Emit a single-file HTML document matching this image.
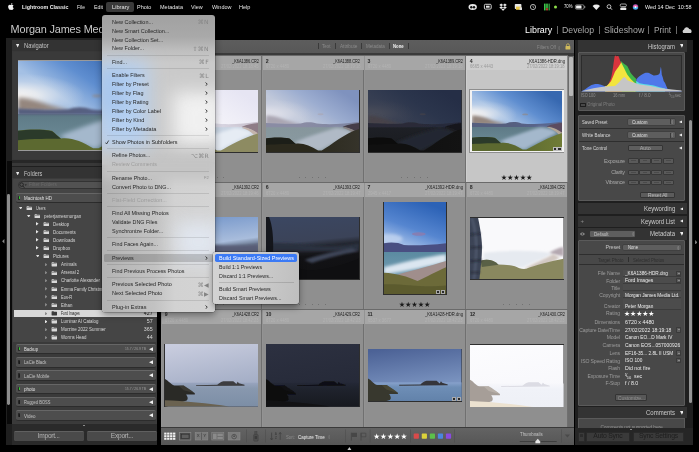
<!DOCTYPE html>
<html><head><meta charset="utf-8"><title>Lightroom Classic</title>
<style>
html,body{margin:0;padding:0;background:#000;}
body{width:699px;height:452px;overflow:hidden;position:relative;font-family:"Liberation Sans",sans-serif;}
#root{position:absolute;left:0;top:0;width:699px;height:452px;overflow:hidden;background:#000;}
#root span{display:block;opacity:0.999;}
</style></head><body><div id="root">
<svg style="position:absolute;left:7.8px;top:3.4px" width="5.8" height="7" viewBox="0 0 17 20"><path fill="#f0f0f0" d="M14.1,10.6c0-2.5,2-3.700,2.100-3.800c-1.200-1.700-3-1.900-3.600-2c-1.500-0.200-3,0.900-3.800,0.900c-0.800,0-2-0.900-3.300-0.900C3.800,4.900,2.200,5.800,1.300,7.400c-1.800,3.100-0.500,7.700,1.300,10.200c0.900,1.200,1.900,2.600,3.200,2.500c1.300-0.100,1.800-0.800,3.300-0.800c1.500,0,2,0.800,3.300,0.800c1.400,0,2.300-1.200,3.100-2.500c1-1.400,1.400-2.800,1.400-2.900C16.900,14.700,14.100,13.700,14.100,10.600z M11.600,3.200c0.700-0.800,1.200-2,1-3.200c-1,0-2.200,0.700-2.900,1.500C9,2.300,8.500,3.500,8.700,4.600C9.800,4.700,10.900,4.100,11.600,3.200z"/></svg>
<span style="position:absolute;top:4.34px;font-size:6.20px;line-height:1;color:#f2f2f2;white-space:pre;left:21.80px;transform:scaleX(0.8597);transform-origin:0 50%;font-weight:bold;">Lightroom Classic</span>
<div style="position:absolute;left:106.00px;top:2.40px;width:28.40px;height:10.00px;background:#3a3a3a;border-radius:2px;"></div>
<span style="position:absolute;top:4.34px;font-size:6.20px;line-height:1;color:#e6e6e6;white-space:pre;left:77.00px;transform:scaleX(0.8007);transform-origin:0 50%;">File</span>
<span style="position:absolute;top:4.34px;font-size:6.20px;line-height:1;color:#e6e6e6;white-space:pre;left:94.00px;transform:scaleX(0.8424);transform-origin:0 50%;">Edit</span>
<span style="position:absolute;top:4.34px;font-size:6.20px;line-height:1;color:#e6e6e6;white-space:pre;left:111.60px;transform:scaleX(0.9181);transform-origin:0 50%;">Library</span>
<span style="position:absolute;top:4.34px;font-size:6.20px;line-height:1;color:#e6e6e6;white-space:pre;left:137.20px;transform:scaleX(0.8887);transform-origin:0 50%;">Photo</span>
<span style="position:absolute;top:4.34px;font-size:6.20px;line-height:1;color:#e6e6e6;white-space:pre;left:159.80px;transform:scaleX(0.8897);transform-origin:0 50%;">Metadata</span>
<span style="position:absolute;top:4.34px;font-size:6.20px;line-height:1;color:#e6e6e6;white-space:pre;left:191.40px;transform:scaleX(0.8704);transform-origin:0 50%;">View</span>
<span style="position:absolute;top:4.34px;font-size:6.20px;line-height:1;color:#e6e6e6;white-space:pre;left:211.60px;transform:scaleX(0.8798);transform-origin:0 50%;">Window</span>
<span style="position:absolute;top:4.34px;font-size:6.20px;line-height:1;color:#e6e6e6;white-space:pre;left:238.60px;transform:scaleX(0.8940);transform-origin:0 50%;">Help</span>
<span style="position:absolute;top:3.99px;font-size:6.10px;line-height:1;color:#f0f0f0;white-space:pre;left:645.30px;transform:scaleX(0.8923);transform-origin:0 50%;">Wed 14 Dec  10:58</span>
<span style="position:absolute;top:4.78px;font-size:4.60px;line-height:1;color:#f0f0f0;white-space:pre;left:564.30px;transform:scaleX(0.9232);transform-origin:0 50%;">70%</span>
<svg style="position:absolute;left:460px;top:0" width="239" height="14" viewBox="460 0 239 14"><ellipse cx="472.7" cy="7" rx="4.2" ry="2.9" fill="#e8e8e8"/><circle cx="471.3" cy="7.2" r="1.2" fill="#111"/><circle cx="474" cy="7.2" r="1.2" fill="#111"/><rect x="484.4" y="4.3" width="6.8" height="4.8" rx="1" fill="none" stroke="#e8e8e8" stroke-width="0.9"/><rect x="486" y="5.7" width="3.6" height="2" fill="#e8e8e8"/><path d="M501.2,3.6 l1.9,1.3 -1.9,1.3 -1.9,-1.3z M504.9,3.6 l1.9,1.3 -1.9,1.3 -1.9,-1.3z M501.2,6.3 l1.9,1.3 -1.9,1.3 -1.9,-1.3z M504.9,6.3 l1.9,1.3 -1.9,1.3 -1.9,-1.3z M503.05,8.4 l1.7,1.2 -1.7,1.1 -1.7,-1.1z" fill="#e8e8e8"/><rect x="514.8" y="4" width="6.6" height="5" rx="0.8" fill="#e8e8e8"/><rect x="516" y="6.6" width="4.6" height="3.2" fill="#e8c64a"/><rect x="519.6" y="7.4" width="2.4" height="2.6" fill="#ddd"/><circle cx="533" cy="7" r="2.6" fill="none" stroke="#d8d8d8" stroke-width="0.8"/><path d="M533,5.6 V7.1 L534,7.8" stroke="#d8d8d8" stroke-width="0.6" fill="none"/><rect x="544" y="3.6" width="1.6" height="6.8" fill="#3ec84a"/><rect x="546.2" y="3.6" width="1.6" height="4.6" fill="#3ec84a"/><rect x="546.2" y="8.2" width="1.6" height="2.2" fill="#e04a3a"/><rect x="548.4" y="3.6" width="1.6" height="6.8" fill="#2a8a34"/><circle cx="555.5" cy="7" r="1.5" fill="#8ede4a"/><rect x="575.4" y="4.8" width="8.6" height="4.4" rx="1.2" fill="none" stroke="#bdbdbd" stroke-width="0.6"/><rect x="576.1" y="5.5" width="5.4" height="3" rx="0.6" fill="#f0f0f0"/><rect x="584.4" y="6.1" width="0.8" height="1.8" fill="#bdbdbd"/><path d="M592.6,6 A5.4,5.4 0 0 1 600,6 L596.3,10 Z" fill="#ececec"/><circle cx="609" cy="6.6" r="1.9" fill="none" stroke="#e8e8e8" stroke-width="0.8"/><path d="M610.4,8 L612,9.7" stroke="#e8e8e8" stroke-width="0.9"/><rect x="620.2" y="4" width="6.2" height="2.6" rx="1.2" fill="none" stroke="#e8e8e8" stroke-width="0.7"/><rect x="620.2" y="7.5" width="6.2" height="2.6" rx="1.2" fill="#e8e8e8"/><circle cx="635.5" cy="7" r="2.9" fill="#3a3a6a"/><path d="M633,7 a2.5,2.5 0 0 1 5,0z" fill="#e85aa8"/><path d="M633,7 a2.5,2.5 0 0 0 5,0z" fill="#4ab4f0"/><circle cx="635.5" cy="7" r="1" fill="#fff"/></svg>
<span style="position:absolute;top:24.16px;font-size:10.90px;line-height:1;color:#cacaca;white-space:pre;left:10.60px;letter-spacing:-0.15px;">Morgan James Media Ltd</span>
<span style="position:absolute;top:25.05px;font-size:9.40px;line-height:1;color:#ffffff;white-space:pre;left:525.00px;transform:scaleX(0.9501);transform-origin:0 50%;">Library</span>
<span style="position:absolute;top:25.05px;font-size:9.40px;line-height:1;color:#a8a8a8;white-space:pre;left:561.90px;transform:scaleX(0.9307);transform-origin:0 50%;">Develop</span>
<span style="position:absolute;top:25.05px;font-size:9.40px;line-height:1;color:#a8a8a8;white-space:pre;left:603.60px;transform:scaleX(0.9429);transform-origin:0 50%;">Slideshow</span>
<span style="position:absolute;top:25.05px;font-size:9.40px;line-height:1;color:#a8a8a8;white-space:pre;left:653.80px;transform:scaleX(0.8899);transform-origin:0 50%;">Print</span>
<div style="position:absolute;left:557.10px;top:26.00px;width:0.60px;height:8.00px;background:#6a6a6a;"></div>
<div style="position:absolute;left:598.80px;top:26.00px;width:0.60px;height:8.00px;background:#6a6a6a;"></div>
<div style="position:absolute;left:648.40px;top:26.00px;width:0.60px;height:8.00px;background:#6a6a6a;"></div>
<div style="position:absolute;left:675.70px;top:26.00px;width:0.60px;height:8.00px;background:#6a6a6a;"></div>
<svg style="position:absolute;left:682px;top:26.5px" width="10" height="6.4" viewBox="0 0 20 13"><path d="M4.5,13 A4,4 0 0 1 4,5.200 A5.500,5.500 0 0 1 14.500,4 A4.600,4.600 0 0 1 16,13 Z" fill="#d0d0d0"/></svg>
<div style="position:absolute;left:6.00px;top:38.00px;width:151.20px;height:407.00px;background:#1f1f1f;"></div>
<div style="position:absolute;left:6.60px;top:161.00px;width:5.20px;height:263.00px;background:#0a0a0a;"></div>
<div style="position:absolute;left:7.20px;top:194.40px;width:2.80px;height:210.60px;background:#8c8c8c;border-radius:1.4px;"></div>
<svg style="position:absolute;left:2px;top:239.3px" width="2.5" height="4.6" viewBox="0 0 3 6"><path d="M3,0 L0,3 L3,6Z" fill="#8a8a8a"/></svg>
<div style="position:absolute;left:12.00px;top:39.60px;width:145.20px;height:11.40px;background:#333333;"></div>
<svg style="position:absolute;left:15.7px;top:44.2px" width="3.3" height="3.5" viewBox="0 0 4 4"><path d="M0,0 L4,0 L2,4Z" fill="#e8e8e8"/></svg>
<span style="position:absolute;top:42.41px;font-size:7.20px;line-height:1;color:#c2c2c2;white-space:pre;left:23.70px;transform:scaleX(0.8048);transform-origin:0 50%;">Navigator</span>
<div style="position:absolute;left:12.00px;top:51.00px;width:145.20px;height:109.00px;background:#383838;"></div>
<div style="position:absolute;left:13.40px;top:52.40px;width:142.60px;height:106.20px;background:#3a3a3a;border-radius:1px;"></div>
<div style="position:absolute;left:17.80px;top:59.90px;width:135.40px;height:90.70px;background:#9a9a9a;"></div>
<svg style="position:absolute;left:18.40px;top:60.50px;" width="134.20" height="89.50" viewBox="0 0 150 100" preserveAspectRatio="none"><defs><linearGradient id="a1" gradientUnits="userSpaceOnUse" x1="118" y1="0" x2="78" y2="60"><stop offset="0" stop-color="#3768b0"/><stop offset="0.55" stop-color="#5f8ed0"/><stop offset="1" stop-color="#a4c0e4"/></linearGradient><radialGradient id="a2" cx="0" cy="0.5" r="0.5" gradientTransform="translate(0 0.5) scale(1.0 0.6) translate(0 -0.5)"><stop offset="0" stop-color="#f6f4f2" stop-opacity="1.0"/><stop offset="0.3" stop-color="#f6f4f2" stop-opacity="0.8"/><stop offset="0.65" stop-color="#f6f4f2" stop-opacity="0.28"/><stop offset="1" stop-color="#f6f4f2" stop-opacity="0"/></radialGradient><linearGradient id="a3" x1="0" y1="0" x2="0" y2="1"><stop offset="0" stop-color="#5e7a86"/><stop offset="1" stop-color="#70909c"/></linearGradient><linearGradient id="a4" x1="0" y1="0" x2="1" y2="0"><stop offset="0" stop-color="#565e7e"/><stop offset="0.4" stop-color="#565e7e"/><stop offset="1" stop-color="#5a6a96"/></linearGradient><linearGradient id="a7" x1="0" y1="0" x2="1" y2="0"><stop offset="0" stop-color="#5c6930"/><stop offset="0.5" stop-color="#5c6930"/><stop offset="1" stop-color="#707c36"/></linearGradient><filter id="a5" x="-10%" y="-40%" width="120%" height="180%"><feGaussianBlur stdDeviation="2.4"/></filter><filter id="a6" x="-10%" y="-40%" width="120%" height="180%"><feGaussianBlur stdDeviation="1.1"/></filter></defs><rect width="150" height="100" fill="url(#a1)"/><rect y="-3" width="150" height="84" fill="url(#a2)"/><path d="M0,41 C10,41 22,44 34,49 C44,52 54,54 60,56 L0,57 Z" fill="#94867e" filter="url(#a5)"/><rect y="59" width="150" height="41" fill="url(#a3)"/><path d="M0,53 C20,54 40,55 56,54 C64,51 74,51 82,54 C100,56 126,55 150,51 L150,60 L0,60 Z" fill="url(#a4)" filter="url(#a6)"/><ellipse cx="88" cy="39" rx="5" ry="1.500" fill="#94867e" opacity="0.6" filter="url(#a6)"/><path d="M124,59 C132,55 142,54 150,53 L150,72 C144,66 136,61 124,60 Z" fill="#5c4c5e" filter="url(#a6)"/><path d="M112,61 C96,66 70,74 46,84 L58,90 C70,92 80,96 86,98 C100,90 125,78 141,70 C137,65 124,61 112,61 Z" fill="#a4b8cc" filter="url(#a5)"/><path d="M124,61 C132,63 139,67 143,72 L150,70 C144,65 134,61 128,60 Z" fill="#b4a696" filter="url(#a6)"/><path d="M0,78 C10,76 28,76 38,78 C42,81 44,84 48,86.500 C60,85 72,90 84,97.500 L90,97.500 C104,90 128,76 150,70 L150,100 L0,100 Z" fill="url(#a7)"/><path d="M0,78 C10,76.500 28,76 38,78.500 C42,81 44,84 48,87 C36,87 16,87 0,88.500 Z" fill="#2b3a2a"/></svg>
<div style="position:absolute;left:12.00px;top:160.00px;width:145.20px;height:3.20px;background:#272727;"></div>
<div style="position:absolute;left:12.00px;top:163.20px;width:145.20px;height:3.20px;background:#383838;"></div>
<div style="position:absolute;left:12.00px;top:166.60px;width:145.20px;height:11.80px;background:#333333;"></div>
<svg style="position:absolute;left:15.9px;top:171.6px" width="3.3" height="3.5" viewBox="0 0 4 4"><path d="M0,0 L4,0 L2,4Z" fill="#e8e8e8"/></svg>
<span style="position:absolute;top:169.81px;font-size:7.20px;line-height:1;color:#c2c2c2;white-space:pre;left:23.60px;transform:scaleX(0.7664);transform-origin:0 50%;">Folders</span>
<div style="position:absolute;left:12.00px;top:178.40px;width:145.20px;height:245.60px;background:#3b3b3b;"></div>
<div style="position:absolute;left:13.40px;top:179.40px;width:142.60px;height:243.60px;background:#454545;border-radius:1px;"></div>
<div style="position:absolute;left:17.60px;top:180.60px;width:134.40px;height:8.40px;background:#525252;border-radius:4px;border:0.5px solid #333;box-sizing:border-box;"></div>
<svg style="position:absolute;left:19px;top:181.6px" width="8" height="6.500" viewBox="0 0 8 6.500"><circle cx="2.6" cy="2.6" r="1.8" fill="none" stroke="#1c1c1c" stroke-width="0.8"/><path d="M3.800,4 L5.400,5.800" stroke="#1c1c1c" stroke-width="0.9"/><path d="M5.600,2.400 h2.200 l-1.100,1.300z" fill="#1c1c1c"/></svg>
<span style="position:absolute;top:181.75px;font-size:5.80px;line-height:1;color:#6a6a6a;white-space:pre;left:29.00px;transform:scaleX(0.8274);transform-origin:0 50%;">Filter Folders</span>
<div style="position:absolute;left:16.40px;top:193.00px;width:139.60px;height:10.00px;background:#4d4d4d;border-radius:2px;border-top:0.6px solid #666;border-bottom:0.6px solid #2c2c2c;box-sizing:border-box;"></div>
<div style="position:absolute;left:18.30px;top:195.80px;width:2.20px;height:4.20px;background:#262626;border-radius:0.8px;"></div>
<div style="position:absolute;left:18.80px;top:196.30px;width:1.20px;height:3.20px;background:#35c235;border-radius:0.5px;"></div>
<span style="position:absolute;top:196.05px;font-size:5.60px;line-height:1;color:#e2e2e2;white-space:pre;left:23.60px;transform:scaleX(0.7933);transform-origin:0 50%;">Macintosh HD</span>
<svg style="position:absolute;left:19.00px;top:206.70px" width="3.400" height="2.600" viewBox="0 0 4 3"><path d="M0,0 L4,0 L2,3Z" fill="#e0e0e0"/></svg>
<svg style="position:absolute;left:25.80px;top:205.90px" width="6.6" height="4.6" viewBox="0 0 14 11"><path d="M0.500,1.500 Q0.500,0.500 1.500,0.500 H5 L6.500,2 H12.500 Q13.500,2 13.500,3 V9.500 Q13.500,10.500 12.500,10.500 H1.500 Q0.500,10.500 0.500,9.500Z" fill="#d8d8d8"/><rect x="1.500" y="3.600" width="11" height="1" fill="#444"/></svg>
<span style="position:absolute;top:205.65px;font-size:5.60px;line-height:1;color:#d8d8d8;white-space:pre;left:36.00px;transform:scaleX(0.6496);transform-origin:0 50%;">Users</span>
<svg style="position:absolute;left:27.40px;top:214.70px" width="3.400" height="2.600" viewBox="0 0 4 3"><path d="M0,0 L4,0 L2,3Z" fill="#e0e0e0"/></svg>
<svg style="position:absolute;left:34.20px;top:213.90px" width="6.6" height="4.6" viewBox="0 0 14 11"><path d="M0.500,1.500 Q0.500,0.500 1.500,0.500 H5 L6.500,2 H12.500 Q13.500,2 13.500,3 V9.500 Q13.500,10.500 12.500,10.500 H1.500 Q0.500,10.500 0.500,9.500Z" fill="#d8d8d8"/><rect x="1.500" y="3.600" width="11" height="1" fill="#444"/></svg>
<span style="position:absolute;top:213.65px;font-size:5.60px;line-height:1;color:#d8d8d8;white-space:pre;left:44.40px;transform:scaleX(0.7967);transform-origin:0 50%;">peterjamesmorgan</span>
<svg style="position:absolute;left:36.40px;top:222.30px" width="2.600" height="3.400" viewBox="0 0 3 4"><path d="M0,0 L3,2 L0,4Z" fill="#e8e8e8"/></svg>
<svg style="position:absolute;left:42.60px;top:221.90px" width="6.6" height="4.6" viewBox="0 0 14 11"><path d="M0.500,1.500 Q0.500,0.500 1.500,0.500 H5 L6.500,2 H12.500 Q13.500,2 13.500,3 V9.500 Q13.500,10.500 12.500,10.500 H1.500 Q0.500,10.500 0.500,9.500Z" fill="#d8d8d8"/><rect x="1.500" y="3.600" width="11" height="1" fill="#444"/></svg>
<span style="position:absolute;top:221.65px;font-size:5.60px;line-height:1;color:#d8d8d8;white-space:pre;left:52.80px;transform:scaleX(0.7886);transform-origin:0 50%;">Desktop</span>
<svg style="position:absolute;left:36.40px;top:230.30px" width="2.600" height="3.400" viewBox="0 0 3 4"><path d="M0,0 L3,2 L0,4Z" fill="#e8e8e8"/></svg>
<svg style="position:absolute;left:42.60px;top:229.90px" width="6.6" height="4.6" viewBox="0 0 14 11"><path d="M0.500,1.500 Q0.500,0.500 1.500,0.500 H5 L6.500,2 H12.500 Q13.500,2 13.500,3 V9.500 Q13.500,10.500 12.500,10.500 H1.500 Q0.500,10.500 0.500,9.500Z" fill="#d8d8d8"/><rect x="1.500" y="3.600" width="11" height="1" fill="#444"/></svg>
<span style="position:absolute;top:229.65px;font-size:5.60px;line-height:1;color:#d8d8d8;white-space:pre;left:52.80px;transform:scaleX(0.8015);transform-origin:0 50%;">Documents</span>
<svg style="position:absolute;left:36.40px;top:238.30px" width="2.600" height="3.400" viewBox="0 0 3 4"><path d="M0,0 L3,2 L0,4Z" fill="#e8e8e8"/></svg>
<svg style="position:absolute;left:42.60px;top:237.90px" width="6.6" height="4.6" viewBox="0 0 14 11"><path d="M0.500,1.500 Q0.500,0.500 1.500,0.500 H5 L6.500,2 H12.500 Q13.500,2 13.500,3 V9.500 Q13.500,10.500 12.500,10.500 H1.500 Q0.500,10.500 0.500,9.500Z" fill="#d8d8d8"/><rect x="1.500" y="3.600" width="11" height="1" fill="#444"/></svg>
<span style="position:absolute;top:237.65px;font-size:5.60px;line-height:1;color:#d8d8d8;white-space:pre;left:52.80px;transform:scaleX(0.8085);transform-origin:0 50%;">Downloads</span>
<svg style="position:absolute;left:36.40px;top:246.30px" width="2.600" height="3.400" viewBox="0 0 3 4"><path d="M0,0 L3,2 L0,4Z" fill="#e8e8e8"/></svg>
<svg style="position:absolute;left:42.60px;top:245.90px" width="6.6" height="4.6" viewBox="0 0 14 11"><path d="M0.500,1.500 Q0.500,0.500 1.500,0.500 H5 L6.500,2 H12.500 Q13.500,2 13.500,3 V9.500 Q13.500,10.500 12.500,10.500 H1.500 Q0.500,10.500 0.500,9.500Z" fill="#d8d8d8"/><rect x="1.500" y="3.600" width="11" height="1" fill="#444"/></svg>
<span style="position:absolute;top:245.65px;font-size:5.60px;line-height:1;color:#d8d8d8;white-space:pre;left:52.80px;transform:scaleX(0.8126);transform-origin:0 50%;">Dropbox</span>
<svg style="position:absolute;left:35.80px;top:254.70px" width="3.400" height="2.600" viewBox="0 0 4 3"><path d="M0,0 L4,0 L2,3Z" fill="#e0e0e0"/></svg>
<svg style="position:absolute;left:42.60px;top:253.90px" width="6.6" height="4.6" viewBox="0 0 14 11"><path d="M0.500,1.500 Q0.500,0.500 1.500,0.500 H5 L6.500,2 H12.500 Q13.500,2 13.500,3 V9.500 Q13.500,10.500 12.500,10.500 H1.500 Q0.500,10.500 0.500,9.500Z" fill="#d8d8d8"/><rect x="1.500" y="3.600" width="11" height="1" fill="#444"/></svg>
<span style="position:absolute;top:253.65px;font-size:5.60px;line-height:1;color:#d8d8d8;white-space:pre;left:52.80px;transform:scaleX(0.7810);transform-origin:0 50%;">Pictures</span>
<svg style="position:absolute;left:44.80px;top:262.70px" width="2.600" height="3.400" viewBox="0 0 3 4"><path d="M0,0 L3,2 L0,4Z" fill="#8a8a8a"/></svg>
<svg style="position:absolute;left:51.00px;top:262.30px" width="6.6" height="4.6" viewBox="0 0 14 11"><path d="M0.500,1.500 Q0.500,0.500 1.500,0.500 H5 L6.500,2 H12.500 Q13.500,2 13.500,3 V9.500 Q13.500,10.500 12.500,10.500 H1.500 Q0.500,10.500 0.500,9.500Z" fill="#d8d8d8"/><rect x="1.500" y="3.600" width="11" height="1" fill="#444"/></svg>
<span style="position:absolute;top:262.05px;font-size:5.60px;line-height:1;color:#d8d8d8;white-space:pre;left:61.20px;transform:scaleX(0.7932);transform-origin:0 50%;">Animals</span>
<svg style="position:absolute;left:44.80px;top:270.90px" width="2.600" height="3.400" viewBox="0 0 3 4"><path d="M0,0 L3,2 L0,4Z" fill="#8a8a8a"/></svg>
<svg style="position:absolute;left:51.00px;top:270.50px" width="6.6" height="4.6" viewBox="0 0 14 11"><path d="M0.500,1.500 Q0.500,0.500 1.500,0.500 H5 L6.500,2 H12.500 Q13.500,2 13.500,3 V9.500 Q13.500,10.500 12.500,10.500 H1.500 Q0.500,10.500 0.500,9.500Z" fill="#d8d8d8"/><rect x="1.500" y="3.600" width="11" height="1" fill="#444"/></svg>
<span style="position:absolute;top:270.25px;font-size:5.60px;line-height:1;color:#d8d8d8;white-space:pre;left:61.20px;transform:scaleX(0.7693);transform-origin:0 50%;">Arsenal 2</span>
<svg style="position:absolute;left:44.80px;top:279.10px" width="2.600" height="3.400" viewBox="0 0 3 4"><path d="M0,0 L3,2 L0,4Z" fill="#8a8a8a"/></svg>
<svg style="position:absolute;left:51.00px;top:278.70px" width="6.6" height="4.6" viewBox="0 0 14 11"><path d="M0.500,1.500 Q0.500,0.500 1.500,0.500 H5 L6.500,2 H12.500 Q13.500,2 13.500,3 V9.500 Q13.500,10.500 12.500,10.500 H1.500 Q0.500,10.500 0.500,9.500Z" fill="#d8d8d8"/><rect x="1.500" y="3.600" width="11" height="1" fill="#444"/></svg>
<span style="position:absolute;top:278.45px;font-size:5.60px;line-height:1;color:#d8d8d8;white-space:pre;left:61.20px;transform:scaleX(0.7929);transform-origin:0 50%;">Charlotte Alexander</span>
<svg style="position:absolute;left:44.80px;top:287.30px" width="2.600" height="3.400" viewBox="0 0 3 4"><path d="M0,0 L3,2 L0,4Z" fill="#8a8a8a"/></svg>
<svg style="position:absolute;left:51.00px;top:286.90px" width="6.6" height="4.6" viewBox="0 0 14 11"><path d="M0.500,1.500 Q0.500,0.500 1.500,0.500 H5 L6.500,2 H12.500 Q13.500,2 13.500,3 V9.500 Q13.500,10.500 12.500,10.500 H1.500 Q0.500,10.500 0.500,9.500Z" fill="#d8d8d8"/><rect x="1.500" y="3.600" width="11" height="1" fill="#444"/></svg>
<span style="position:absolute;top:286.65px;font-size:5.60px;line-height:1;color:#d8d8d8;white-space:pre;left:61.20px;transform:scaleX(0.7510);transform-origin:0 50%;">Emma Family Christmas</span>
<svg style="position:absolute;left:44.80px;top:295.30px" width="2.600" height="3.400" viewBox="0 0 3 4"><path d="M0,0 L3,2 L0,4Z" fill="#8a8a8a"/></svg>
<svg style="position:absolute;left:51.00px;top:294.90px" width="6.6" height="4.6" viewBox="0 0 14 11"><path d="M0.500,1.500 Q0.500,0.500 1.500,0.500 H5 L6.500,2 H12.500 Q13.500,2 13.500,3 V9.500 Q13.500,10.500 12.500,10.500 H1.500 Q0.500,10.500 0.500,9.500Z" fill="#d8d8d8"/><rect x="1.500" y="3.600" width="11" height="1" fill="#444"/></svg>
<span style="position:absolute;top:294.65px;font-size:5.60px;line-height:1;color:#d8d8d8;white-space:pre;left:61.20px;transform:scaleX(0.7198);transform-origin:0 50%;">Eos-R</span>
<svg style="position:absolute;left:44.80px;top:303.30px" width="2.600" height="3.400" viewBox="0 0 3 4"><path d="M0,0 L3,2 L0,4Z" fill="#8a8a8a"/></svg>
<svg style="position:absolute;left:51.00px;top:302.90px" width="6.6" height="4.6" viewBox="0 0 14 11"><path d="M0.500,1.500 Q0.500,0.500 1.500,0.500 H5 L6.500,2 H12.500 Q13.500,2 13.500,3 V9.500 Q13.500,10.500 12.500,10.500 H1.500 Q0.500,10.500 0.500,9.500Z" fill="#d8d8d8"/><rect x="1.500" y="3.600" width="11" height="1" fill="#444"/></svg>
<span style="position:absolute;top:302.65px;font-size:5.60px;line-height:1;color:#d8d8d8;white-space:pre;left:61.20px;transform:scaleX(0.7790);transform-origin:0 50%;">Ethan</span>
<div style="position:absolute;left:14.40px;top:310.00px;width:142.80px;height:6.70px;background:#d8d8d8;"></div>
<svg style="position:absolute;left:44.80px;top:311.60px" width="2.600" height="3.400" viewBox="0 0 3 4"><path d="M0,0 L3,2 L0,4Z" fill="#8a8a8a"/></svg>
<svg style="position:absolute;left:51.00px;top:311.20px" width="6.6" height="4.6" viewBox="0 0 14 11"><path d="M0.500,1.500 Q0.500,0.500 1.500,0.500 H5 L6.500,2 H12.500 Q13.500,2 13.500,3 V9.500 Q13.500,10.500 12.500,10.500 H1.500 Q0.500,10.500 0.500,9.500Z" fill="#3a3a3a"/><rect x="1.500" y="3.600" width="11" height="1" fill="#444"/></svg>
<span style="position:absolute;top:310.95px;font-size:5.60px;line-height:1;color:#1a1a1a;white-space:pre;left:61.20px;transform:scaleX(0.5981);transform-origin:0 50%;">Ford Images</span>
<span style="position:absolute;top:311.01px;font-size:5.30px;line-height:1;color:#222;white-space:pre;right:546.40px;">427</span>
<svg style="position:absolute;left:44.80px;top:319.50px" width="2.600" height="3.400" viewBox="0 0 3 4"><path d="M0,0 L3,2 L0,4Z" fill="#e8e8e8"/></svg>
<svg style="position:absolute;left:51.00px;top:319.10px" width="6.6" height="4.6" viewBox="0 0 14 11"><path d="M0.500,1.500 Q0.500,0.500 1.500,0.500 H5 L6.500,2 H12.500 Q13.500,2 13.500,3 V9.500 Q13.500,10.500 12.500,10.500 H1.500 Q0.500,10.500 0.500,9.500Z" fill="#d8d8d8"/><rect x="1.500" y="3.600" width="11" height="1" fill="#444"/></svg>
<span style="position:absolute;top:318.85px;font-size:5.60px;line-height:1;color:#d8d8d8;white-space:pre;left:61.20px;transform:scaleX(0.7852);transform-origin:0 50%;">Luminar AI Catalog</span>
<span style="position:absolute;top:318.91px;font-size:5.30px;line-height:1;color:#d8d8d8;white-space:pre;right:546.40px;">57</span>
<svg style="position:absolute;left:44.80px;top:327.60px" width="2.600" height="3.400" viewBox="0 0 3 4"><path d="M0,0 L3,2 L0,4Z" fill="#8a8a8a"/></svg>
<svg style="position:absolute;left:51.00px;top:327.20px" width="6.6" height="4.6" viewBox="0 0 14 11"><path d="M0.500,1.500 Q0.500,0.500 1.500,0.500 H5 L6.500,2 H12.500 Q13.500,2 13.500,3 V9.500 Q13.500,10.500 12.500,10.500 H1.500 Q0.500,10.500 0.500,9.500Z" fill="#d8d8d8"/><rect x="1.500" y="3.600" width="11" height="1" fill="#444"/></svg>
<span style="position:absolute;top:326.95px;font-size:5.60px;line-height:1;color:#d8d8d8;white-space:pre;left:61.20px;transform:scaleX(0.7909);transform-origin:0 50%;">Morzine 2022 Summer</span>
<span style="position:absolute;top:327.01px;font-size:5.30px;line-height:1;color:#d8d8d8;white-space:pre;right:546.40px;">365</span>
<svg style="position:absolute;left:44.80px;top:335.70px" width="2.600" height="3.400" viewBox="0 0 3 4"><path d="M0,0 L3,2 L0,4Z" fill="#8a8a8a"/></svg>
<svg style="position:absolute;left:51.00px;top:335.30px" width="6.6" height="4.6" viewBox="0 0 14 11"><path d="M0.500,1.500 Q0.500,0.500 1.500,0.500 H5 L6.500,2 H12.500 Q13.500,2 13.500,3 V9.500 Q13.500,10.500 12.500,10.500 H1.500 Q0.500,10.500 0.500,9.500Z" fill="#d8d8d8"/><rect x="1.500" y="3.600" width="11" height="1" fill="#444"/></svg>
<span style="position:absolute;top:335.05px;font-size:5.60px;line-height:1;color:#d8d8d8;white-space:pre;left:61.20px;transform:scaleX(0.7798);transform-origin:0 50%;">Worms Head</span>
<span style="position:absolute;top:335.11px;font-size:5.30px;line-height:1;color:#d8d8d8;white-space:pre;right:546.40px;">44</span>
<div style="position:absolute;left:13.40px;top:341.60px;width:142.60px;height:81.40px;background:#3a3a3a;"></div>
<div style="position:absolute;left:16.40px;top:343.70px;width:139.60px;height:10.50px;background:#4d4d4d;border-radius:2px;border-top:0.6px solid #666;border-bottom:0.6px solid #2c2c2c;box-sizing:border-box;"></div>
<div style="position:absolute;left:18.30px;top:346.75px;width:2.20px;height:4.20px;background:#262626;border-radius:0.8px;"></div>
<div style="position:absolute;left:18.80px;top:347.25px;width:1.20px;height:3.20px;background:#35c235;border-radius:0.5px;"></div>
<span style="position:absolute;top:347.00px;font-size:5.60px;line-height:1;color:#e2e2e2;white-space:pre;left:23.60px;transform:scaleX(0.7495);transform-origin:0 50%;">Backup</span>
<span style="position:absolute;top:347.13px;font-size:4.40px;line-height:1;color:#9c9c9c;white-space:pre;left:125.00px;transform:scaleX(0.7620);transform-origin:0 50%;">15.7 / 26.9 TB</span>
<svg style="position:absolute;left:149px;top:346.75px" width="4.2" height="4.4" viewBox="0 0 4 4"><path d="M4,0 L0,2 L4,4Z" fill="#f0f0f0"/></svg>
<div style="position:absolute;left:16.40px;top:357.00px;width:139.60px;height:10.50px;background:#4d4d4d;border-radius:2px;border-top:0.6px solid #666;border-bottom:0.6px solid #2c2c2c;box-sizing:border-box;"></div>
<div style="position:absolute;left:18.30px;top:360.05px;width:2.20px;height:4.20px;background:#262626;border-radius:0.8px;"></div>
<div style="position:absolute;left:18.80px;top:360.55px;width:1.20px;height:3.20px;background:#1a1a1a;border-radius:0.5px;"></div>
<span style="position:absolute;top:360.30px;font-size:5.60px;line-height:1;color:#c4c4c4;white-space:pre;left:23.60px;transform:scaleX(0.7496);transform-origin:0 50%;">LaCie Black</span>
<svg style="position:absolute;left:149px;top:360.05px" width="4.2" height="4.4" viewBox="0 0 4 4"><path d="M4,0 L0,2 L4,4Z" fill="#f0f0f0"/></svg>
<div style="position:absolute;left:16.40px;top:370.30px;width:139.60px;height:10.50px;background:#4d4d4d;border-radius:2px;border-top:0.6px solid #666;border-bottom:0.6px solid #2c2c2c;box-sizing:border-box;"></div>
<div style="position:absolute;left:18.30px;top:373.35px;width:2.20px;height:4.20px;background:#262626;border-radius:0.8px;"></div>
<div style="position:absolute;left:18.80px;top:373.85px;width:1.20px;height:3.20px;background:#1a1a1a;border-radius:0.5px;"></div>
<span style="position:absolute;top:373.60px;font-size:5.60px;line-height:1;color:#c4c4c4;white-space:pre;left:23.60px;transform:scaleX(0.7771);transform-origin:0 50%;">LaCie Mobile</span>
<svg style="position:absolute;left:149px;top:373.35px" width="4.2" height="4.4" viewBox="0 0 4 4"><path d="M4,0 L0,2 L4,4Z" fill="#f0f0f0"/></svg>
<div style="position:absolute;left:16.40px;top:383.60px;width:139.60px;height:10.50px;background:#4d4d4d;border-radius:2px;border-top:0.6px solid #666;border-bottom:0.6px solid #2c2c2c;box-sizing:border-box;"></div>
<div style="position:absolute;left:18.30px;top:386.65px;width:2.20px;height:4.20px;background:#262626;border-radius:0.8px;"></div>
<div style="position:absolute;left:18.80px;top:387.15px;width:1.20px;height:3.20px;background:#35c235;border-radius:0.5px;"></div>
<span style="position:absolute;top:386.90px;font-size:5.60px;line-height:1;color:#e2e2e2;white-space:pre;left:23.60px;transform:scaleX(0.8135);transform-origin:0 50%;">photo</span>
<span style="position:absolute;top:387.03px;font-size:4.40px;line-height:1;color:#9c9c9c;white-space:pre;left:125.00px;transform:scaleX(0.7620);transform-origin:0 50%;">15.7 / 26.9 TB</span>
<svg style="position:absolute;left:149px;top:386.65px" width="4.2" height="4.4" viewBox="0 0 4 4"><path d="M4,0 L0,2 L4,4Z" fill="#f0f0f0"/></svg>
<div style="position:absolute;left:16.40px;top:396.90px;width:139.60px;height:10.50px;background:#4d4d4d;border-radius:2px;border-top:0.6px solid #666;border-bottom:0.6px solid #2c2c2c;box-sizing:border-box;"></div>
<div style="position:absolute;left:18.30px;top:399.95px;width:2.20px;height:4.20px;background:#262626;border-radius:0.8px;"></div>
<div style="position:absolute;left:18.80px;top:400.45px;width:1.20px;height:3.20px;background:#1a1a1a;border-radius:0.5px;"></div>
<span style="position:absolute;top:400.20px;font-size:5.60px;line-height:1;color:#c4c4c4;white-space:pre;left:23.60px;transform:scaleX(0.7187);transform-origin:0 50%;">Rugged BOSS</span>
<svg style="position:absolute;left:149px;top:399.95px" width="4.2" height="4.4" viewBox="0 0 4 4"><path d="M4,0 L0,2 L4,4Z" fill="#f0f0f0"/></svg>
<div style="position:absolute;left:16.40px;top:410.20px;width:139.60px;height:10.50px;background:#4d4d4d;border-radius:2px;border-top:0.6px solid #666;border-bottom:0.6px solid #2c2c2c;box-sizing:border-box;"></div>
<div style="position:absolute;left:18.30px;top:413.25px;width:2.20px;height:4.20px;background:#262626;border-radius:0.8px;"></div>
<div style="position:absolute;left:18.80px;top:413.75px;width:1.20px;height:3.20px;background:#1a1a1a;border-radius:0.5px;"></div>
<span style="position:absolute;top:413.50px;font-size:5.60px;line-height:1;color:#c4c4c4;white-space:pre;left:23.60px;transform:scaleX(0.8016);transform-origin:0 50%;">Video</span>
<svg style="position:absolute;left:149px;top:413.25px" width="4.2" height="4.4" viewBox="0 0 4 4"><path d="M4,0 L0,2 L4,4Z" fill="#f0f0f0"/></svg>
<div style="position:absolute;left:12.00px;top:424.00px;width:145.20px;height:21.00px;background:#2a2a2a;"></div>
<div style="position:absolute;left:82.60px;top:425.20px;width:2.00px;height:1.00px;background:#999;border-radius:1px;"></div>
<div style="position:absolute;left:13.60px;top:431.00px;width:70.00px;height:10.20px;background:#4a4a4a;border-radius:1.500px;border-top:0.6px solid #606060;box-sizing:border-box;"></div>
<span style="position:absolute;top:433.03px;font-size:6.60px;line-height:1;color:#b4b4b4;white-space:pre;left:-51.40px;width:200px;text-align:center;letter-spacing:-0.25px;">Import...</span>
<div style="position:absolute;left:87.00px;top:431.00px;width:70.00px;height:10.20px;background:#4a4a4a;border-radius:1.500px;border-top:0.6px solid #606060;box-sizing:border-box;"></div>
<span style="position:absolute;top:433.03px;font-size:6.60px;line-height:1;color:#b4b4b4;white-space:pre;left:22.00px;width:200px;text-align:center;letter-spacing:-0.25px;">Export...</span>
<div style="position:absolute;left:160.50px;top:39.60px;width:413.80px;height:405.40px;background:#2a2a2a;"></div>
<div style="position:absolute;left:160.50px;top:39.60px;width:413.80px;height:13.00px;background:linear-gradient(#5d5d5d,#585858);"></div>
<span style="position:absolute;top:43.86px;font-size:5.40px;line-height:1;color:#8c8c8c;white-space:pre;left:322.40px;transform:scaleX(0.8684);transform-origin:0 50%;">Text</span>
<span style="position:absolute;top:43.86px;font-size:5.40px;line-height:1;color:#8c8c8c;white-space:pre;left:339.60px;transform:scaleX(0.8652);transform-origin:0 50%;">Attribute</span>
<span style="position:absolute;top:43.86px;font-size:5.40px;line-height:1;color:#8c8c8c;white-space:pre;left:365.60px;transform:scaleX(0.8350);transform-origin:0 50%;">Metadata</span>
<span style="position:absolute;top:43.86px;font-size:5.40px;line-height:1;color:#f4f4f4;white-space:pre;left:393.00px;transform:scaleX(0.7852);transform-origin:0 50%;font-weight:bold;">None</span>
<div style="position:absolute;left:318.10px;top:43.00px;width:0.60px;height:6.40px;background:#3a3a3a;"></div>
<div style="position:absolute;left:335.30px;top:43.00px;width:0.60px;height:6.40px;background:#3a3a3a;"></div>
<div style="position:absolute;left:361.30px;top:43.00px;width:0.60px;height:6.40px;background:#3a3a3a;"></div>
<div style="position:absolute;left:388.70px;top:43.00px;width:0.60px;height:6.40px;background:#3a3a3a;"></div>
<div style="position:absolute;left:407.70px;top:43.00px;width:0.60px;height:6.40px;background:#3a3a3a;"></div>
<span style="position:absolute;top:45.06px;font-size:5.40px;line-height:1;color:#8a8a8a;white-space:pre;left:537.00px;transform:scaleX(0.8153);transform-origin:0 50%;">Filters Off</span>
<svg style="position:absolute;left:557.500px;top:45.500px" width="2.400" height="4" viewBox="0 0 3 5"><path d="M0,2 L1.500,0 L3,2Z M0,3 L1.500,5 L3,3Z" fill="#7a7a7a"/></svg>
<svg style="position:absolute;left:565.4px;top:42.6px" width="5.800" height="7" viewBox="0 0 6 7"><path d="M1.500,3.200 V2.200 A1.500,1.500 0 0 1 4.500,2.200 V3.200" fill="none" stroke="#c8b45a" stroke-width="0.9"/><rect x="0.500" y="3.100" width="5" height="3.600" rx="0.600" fill="#d2bc5c"/></svg>
<div style="position:absolute;left:160.50px;top:52.60px;width:413.80px;height:3.00px;background:#3a3a3a;"></div>
<div style="position:absolute;left:160.50px;top:55.60px;width:407.40px;height:371.40px;background:#8f8f8f;"></div>
<div style="position:absolute;left:567.90px;top:55.60px;width:6.40px;height:371.40px;background:#6c6c6c;"></div>
<div style="position:absolute;left:569.40px;top:57.00px;width:3.80px;height:38.80px;background:#b8b8b8;border-radius:1px;"></div>
<div style="position:absolute;left:160.50px;top:55.60px;width:101.10px;height:14.90px;background:#a6a6a6;"></div>
<div style="position:absolute;left:261.15px;top:55.60px;width:0.90px;height:126.70px;background:#707070;"></div>
<div style="position:absolute;left:160.95px;top:55.60px;width:0.55px;height:126.70px;background:#939393;"></div>
<span style="position:absolute;top:58.56px;font-size:5.20px;line-height:1;color:#2a2a2a;white-space:pre;left:164.70px;font-weight:bold;letter-spacing:-0.3px;">1</span>
<span style="position:absolute;top:58.51px;font-size:5.30px;line-height:1;color:#1c1c1c;white-space:pre;left:231.70px;transform:scaleX(0.7331);transform-origin:0 50%;">_K6A1386.CR2</span>
<span style="position:absolute;top:65.27px;font-size:4.80px;line-height:1;color:#b3b3b3;white-space:pre;left:164.70px;transform:scaleX(0.8780);transform-origin:0 50%;">6720 x 4480</span>
<span style="position:absolute;top:65.27px;font-size:4.80px;line-height:1;color:#b3b3b3;white-space:pre;left:221.10px;transform:scaleX(0.8537);transform-origin:0 50%;">27/02/2022 18:18:45</span>
<div style="position:absolute;left:261.60px;top:55.60px;width:101.70px;height:14.90px;background:#a6a6a6;"></div>
<div style="position:absolute;left:362.85px;top:55.60px;width:0.90px;height:126.70px;background:#707070;"></div>
<div style="position:absolute;left:262.05px;top:55.60px;width:0.55px;height:126.70px;background:#939393;"></div>
<span style="position:absolute;top:58.56px;font-size:5.20px;line-height:1;color:#2a2a2a;white-space:pre;left:265.80px;font-weight:bold;letter-spacing:-0.3px;">2</span>
<span style="position:absolute;top:58.51px;font-size:5.30px;line-height:1;color:#1c1c1c;white-space:pre;left:333.40px;transform:scaleX(0.7331);transform-origin:0 50%;">_K6A1388.CR2</span>
<span style="position:absolute;top:65.27px;font-size:4.80px;line-height:1;color:#b3b3b3;white-space:pre;left:265.80px;transform:scaleX(0.8780);transform-origin:0 50%;">6720 x 4480</span>
<span style="position:absolute;top:65.27px;font-size:4.80px;line-height:1;color:#b3b3b3;white-space:pre;left:322.80px;transform:scaleX(0.8537);transform-origin:0 50%;">27/02/2022 18:19:18</span>
<div style="position:absolute;left:363.30px;top:55.60px;width:102.20px;height:14.90px;background:#a6a6a6;"></div>
<div style="position:absolute;left:465.05px;top:55.60px;width:0.90px;height:126.70px;background:#707070;"></div>
<div style="position:absolute;left:363.75px;top:55.60px;width:0.55px;height:126.70px;background:#939393;"></div>
<span style="position:absolute;top:58.56px;font-size:5.20px;line-height:1;color:#2a2a2a;white-space:pre;left:367.50px;font-weight:bold;letter-spacing:-0.3px;">3</span>
<span style="position:absolute;top:58.51px;font-size:5.30px;line-height:1;color:#1c1c1c;white-space:pre;left:435.60px;transform:scaleX(0.7331);transform-origin:0 50%;">_K6A1389.CR2</span>
<span style="position:absolute;top:65.27px;font-size:4.80px;line-height:1;color:#b3b3b3;white-space:pre;left:367.50px;transform:scaleX(0.8780);transform-origin:0 50%;">6720 x 4480</span>
<span style="position:absolute;top:65.27px;font-size:4.80px;line-height:1;color:#b3b3b3;white-space:pre;left:425.00px;transform:scaleX(0.8537);transform-origin:0 50%;">27/02/2022 18:19:18</span>
<div style="position:absolute;left:465.50px;top:55.60px;width:102.40px;height:126.70px;background:#c6c6c6;"></div>
<div style="position:absolute;left:465.50px;top:55.60px;width:102.40px;height:14.90px;background:#cecece;"></div>
<div style="position:absolute;left:567.45px;top:55.60px;width:0.90px;height:126.70px;background:#8a8a8a;"></div>
<div style="position:absolute;left:465.95px;top:55.60px;width:0.55px;height:126.70px;background:#cecece;"></div>
<span style="position:absolute;top:58.56px;font-size:5.20px;line-height:1;color:#2a2a2a;white-space:pre;left:469.70px;font-weight:bold;letter-spacing:-0.3px;">4</span>
<span style="position:absolute;top:58.51px;font-size:5.30px;line-height:1;color:#1c1c1c;white-space:pre;left:527.00px;transform:scaleX(0.7864);transform-origin:0 50%;">_K6A1386-HDR.dng</span>
<span style="position:absolute;top:65.27px;font-size:4.80px;line-height:1;color:#9a9a9a;white-space:pre;left:469.70px;transform:scaleX(0.8780);transform-origin:0 50%;">6665 x 4443</span>
<span style="position:absolute;top:65.27px;font-size:4.80px;line-height:1;color:#9a9a9a;white-space:pre;left:527.40px;transform:scaleX(0.8537);transform-origin:0 50%;">27/02/2022 18:19:18</span>
<div style="position:absolute;left:160.50px;top:55.10px;width:407.40px;height:0.80px;background:#6a6a6a;"></div>
<div style="position:absolute;left:160.50px;top:182.30px;width:101.10px;height:14.90px;background:#a6a6a6;"></div>
<div style="position:absolute;left:261.15px;top:182.30px;width:0.90px;height:127.00px;background:#707070;"></div>
<div style="position:absolute;left:160.95px;top:182.30px;width:0.55px;height:127.00px;background:#939393;"></div>
<span style="position:absolute;top:185.26px;font-size:5.20px;line-height:1;color:#2a2a2a;white-space:pre;left:164.70px;font-weight:bold;letter-spacing:-0.3px;">5</span>
<span style="position:absolute;top:185.21px;font-size:5.30px;line-height:1;color:#1c1c1c;white-space:pre;left:231.70px;transform:scaleX(0.7331);transform-origin:0 50%;">_K6A1392.CR2</span>
<span style="position:absolute;top:191.97px;font-size:4.80px;line-height:1;color:#b3b3b3;white-space:pre;left:164.70px;transform:scaleX(0.8780);transform-origin:0 50%;">6720 x 4480</span>
<span style="position:absolute;top:191.97px;font-size:4.80px;line-height:1;color:#b3b3b3;white-space:pre;left:221.10px;transform:scaleX(0.8537);transform-origin:0 50%;">27/02/2022 18:19:46</span>
<div style="position:absolute;left:261.60px;top:182.30px;width:101.70px;height:14.90px;background:#a6a6a6;"></div>
<div style="position:absolute;left:362.85px;top:182.30px;width:0.90px;height:127.00px;background:#707070;"></div>
<div style="position:absolute;left:262.05px;top:182.30px;width:0.55px;height:127.00px;background:#939393;"></div>
<span style="position:absolute;top:185.26px;font-size:5.20px;line-height:1;color:#2a2a2a;white-space:pre;left:265.80px;font-weight:bold;letter-spacing:-0.3px;">6</span>
<span style="position:absolute;top:185.21px;font-size:5.30px;line-height:1;color:#1c1c1c;white-space:pre;left:333.40px;transform:scaleX(0.7331);transform-origin:0 50%;">_K6A1393.CR2</span>
<span style="position:absolute;top:191.97px;font-size:4.80px;line-height:1;color:#b3b3b3;white-space:pre;left:265.80px;transform:scaleX(0.8780);transform-origin:0 50%;">6720 x 4480</span>
<span style="position:absolute;top:191.97px;font-size:4.80px;line-height:1;color:#b3b3b3;white-space:pre;left:322.80px;transform:scaleX(0.8537);transform-origin:0 50%;">27/02/2022 18:19:47</span>
<div style="position:absolute;left:363.30px;top:182.30px;width:102.20px;height:14.90px;background:#a6a6a6;"></div>
<div style="position:absolute;left:465.05px;top:182.30px;width:0.90px;height:127.00px;background:#707070;"></div>
<div style="position:absolute;left:363.75px;top:182.30px;width:0.55px;height:127.00px;background:#939393;"></div>
<span style="position:absolute;top:185.26px;font-size:5.20px;line-height:1;color:#2a2a2a;white-space:pre;left:367.50px;font-weight:bold;letter-spacing:-0.3px;">7</span>
<span style="position:absolute;top:185.21px;font-size:5.30px;line-height:1;color:#1c1c1c;white-space:pre;left:424.60px;transform:scaleX(0.7864);transform-origin:0 50%;">_K6A1392-HDR.dng</span>
<span style="position:absolute;top:191.97px;font-size:4.80px;line-height:1;color:#b3b3b3;white-space:pre;left:367.50px;transform:scaleX(0.8780);transform-origin:0 50%;">2945 x 4417</span>
<span style="position:absolute;top:191.97px;font-size:4.80px;line-height:1;color:#b3b3b3;white-space:pre;left:425.00px;transform:scaleX(0.8537);transform-origin:0 50%;">27/02/2022 18:19:47</span>
<div style="position:absolute;left:465.50px;top:182.30px;width:102.40px;height:14.90px;background:#a6a6a6;"></div>
<div style="position:absolute;left:567.45px;top:182.30px;width:0.90px;height:127.00px;background:#707070;"></div>
<div style="position:absolute;left:465.95px;top:182.30px;width:0.55px;height:127.00px;background:#939393;"></div>
<span style="position:absolute;top:185.26px;font-size:5.20px;line-height:1;color:#2a2a2a;white-space:pre;left:469.70px;font-weight:bold;letter-spacing:-0.3px;">8</span>
<span style="position:absolute;top:185.21px;font-size:5.30px;line-height:1;color:#1c1c1c;white-space:pre;left:538.00px;transform:scaleX(0.7331);transform-origin:0 50%;">_K6A1394.CR2</span>
<span style="position:absolute;top:191.97px;font-size:4.80px;line-height:1;color:#b3b3b3;white-space:pre;left:469.70px;transform:scaleX(0.8780);transform-origin:0 50%;">6720 x 4480</span>
<span style="position:absolute;top:191.97px;font-size:4.80px;line-height:1;color:#b3b3b3;white-space:pre;left:527.40px;transform:scaleX(0.8537);transform-origin:0 50%;">27/02/2022 18:19:47</span>
<div style="position:absolute;left:160.50px;top:181.80px;width:407.40px;height:0.80px;background:#6a6a6a;"></div>
<div style="position:absolute;left:160.50px;top:309.30px;width:101.10px;height:14.90px;background:#a6a6a6;"></div>
<div style="position:absolute;left:261.15px;top:309.30px;width:0.90px;height:117.70px;background:#707070;"></div>
<div style="position:absolute;left:160.95px;top:309.30px;width:0.55px;height:117.70px;background:#939393;"></div>
<span style="position:absolute;top:312.26px;font-size:5.20px;line-height:1;color:#2a2a2a;white-space:pre;left:164.70px;font-weight:bold;letter-spacing:-0.3px;">9</span>
<span style="position:absolute;top:312.21px;font-size:5.30px;line-height:1;color:#1c1c1c;white-space:pre;left:231.70px;transform:scaleX(0.7331);transform-origin:0 50%;">_K6A1428.CR2</span>
<span style="position:absolute;top:318.97px;font-size:4.80px;line-height:1;color:#b3b3b3;white-space:pre;left:164.70px;transform:scaleX(0.8780);transform-origin:0 50%;">6720 x 4480</span>
<span style="position:absolute;top:318.97px;font-size:4.80px;line-height:1;color:#b3b3b3;white-space:pre;left:221.10px;transform:scaleX(0.8537);transform-origin:0 50%;">27/02/2022 18:42:23</span>
<div style="position:absolute;left:261.60px;top:309.30px;width:101.70px;height:14.90px;background:#a6a6a6;"></div>
<div style="position:absolute;left:362.85px;top:309.30px;width:0.90px;height:117.70px;background:#707070;"></div>
<div style="position:absolute;left:262.05px;top:309.30px;width:0.55px;height:117.70px;background:#939393;"></div>
<span style="position:absolute;top:312.26px;font-size:5.20px;line-height:1;color:#2a2a2a;white-space:pre;left:265.80px;font-weight:bold;letter-spacing:-0.3px;">10</span>
<span style="position:absolute;top:312.21px;font-size:5.30px;line-height:1;color:#1c1c1c;white-space:pre;left:333.40px;transform:scaleX(0.7331);transform-origin:0 50%;">_K6A1429.CR2</span>
<span style="position:absolute;top:318.97px;font-size:4.80px;line-height:1;color:#b3b3b3;white-space:pre;left:265.80px;transform:scaleX(0.8780);transform-origin:0 50%;">6720 x 4480</span>
<span style="position:absolute;top:318.97px;font-size:4.80px;line-height:1;color:#b3b3b3;white-space:pre;left:322.80px;transform:scaleX(0.8537);transform-origin:0 50%;">27/02/2022 18:42:23</span>
<div style="position:absolute;left:363.30px;top:309.30px;width:102.20px;height:14.90px;background:#a6a6a6;"></div>
<div style="position:absolute;left:465.05px;top:309.30px;width:0.90px;height:117.70px;background:#707070;"></div>
<div style="position:absolute;left:363.75px;top:309.30px;width:0.55px;height:117.70px;background:#939393;"></div>
<span style="position:absolute;top:312.26px;font-size:5.20px;line-height:1;color:#2a2a2a;white-space:pre;left:367.50px;font-weight:bold;letter-spacing:-0.3px;">11</span>
<span style="position:absolute;top:312.21px;font-size:5.30px;line-height:1;color:#1c1c1c;white-space:pre;left:424.60px;transform:scaleX(0.7864);transform-origin:0 50%;">_K6A1428-HDR.dng</span>
<span style="position:absolute;top:318.97px;font-size:4.80px;line-height:1;color:#b3b3b3;white-space:pre;left:367.50px;transform:scaleX(0.8780);transform-origin:0 50%;">6537 x 3677</span>
<span style="position:absolute;top:318.97px;font-size:4.80px;line-height:1;color:#b3b3b3;white-space:pre;left:425.00px;transform:scaleX(0.8537);transform-origin:0 50%;">27/02/2022 18:42:23</span>
<div style="position:absolute;left:465.50px;top:309.30px;width:102.40px;height:14.90px;background:#a6a6a6;"></div>
<div style="position:absolute;left:567.45px;top:309.30px;width:0.90px;height:117.70px;background:#707070;"></div>
<div style="position:absolute;left:465.95px;top:309.30px;width:0.55px;height:117.70px;background:#939393;"></div>
<span style="position:absolute;top:312.26px;font-size:5.20px;line-height:1;color:#2a2a2a;white-space:pre;left:469.70px;font-weight:bold;letter-spacing:-0.3px;">12</span>
<span style="position:absolute;top:312.21px;font-size:5.30px;line-height:1;color:#1c1c1c;white-space:pre;left:538.00px;transform:scaleX(0.7331);transform-origin:0 50%;">_K6A1430.CR2</span>
<span style="position:absolute;top:318.97px;font-size:4.80px;line-height:1;color:#b3b3b3;white-space:pre;left:469.70px;transform:scaleX(0.8780);transform-origin:0 50%;">6720 x 4480</span>
<span style="position:absolute;top:318.97px;font-size:4.80px;line-height:1;color:#b3b3b3;white-space:pre;left:527.40px;transform:scaleX(0.8537);transform-origin:0 50%;">27/02/2022 18:42:23</span>
<div style="position:absolute;left:160.50px;top:308.80px;width:407.40px;height:0.80px;background:#6a6a6a;"></div>
<div style="position:absolute;left:163.90px;top:89.60px;width:94.30px;height:63.30px;background:#2e2e2e;"></div>
<svg style="position:absolute;left:164.50px;top:90.20px;" width="93.10" height="62.10" viewBox="0 0 150 100" preserveAspectRatio="none"><defs><linearGradient id="b1" gradientUnits="userSpaceOnUse" x1="118" y1="0" x2="78" y2="60"><stop offset="0" stop-color="#e6e5f3"/><stop offset="0.55" stop-color="#efeef7"/><stop offset="1" stop-color="#f5f4f9"/></linearGradient><radialGradient id="b2" cx="0" cy="0.5" r="0.5" gradientTransform="translate(0 0.5) scale(1.0 0.6) translate(0 -0.5)"><stop offset="0" stop-color="#ffffff" stop-opacity="0.9"/><stop offset="0.3" stop-color="#ffffff" stop-opacity="0.7200000000000001"/><stop offset="0.65" stop-color="#ffffff" stop-opacity="0.25200000000000006"/><stop offset="1" stop-color="#ffffff" stop-opacity="0"/></radialGradient><linearGradient id="b3" x1="0" y1="0" x2="0" y2="1"><stop offset="0" stop-color="#c8d4e2"/><stop offset="1" stop-color="#cfd9e6"/></linearGradient><linearGradient id="b4" x1="0" y1="0" x2="1" y2="0"><stop offset="0" stop-color="#e2e2ee"/><stop offset="0.4" stop-color="#e2e2ee"/><stop offset="1" stop-color="#c4bcc8"/></linearGradient><linearGradient id="b7" x1="0" y1="0" x2="1" y2="0"><stop offset="0" stop-color="#8d8b62"/><stop offset="0.5" stop-color="#8d8b62"/><stop offset="1" stop-color="#8d8b62"/></linearGradient><filter id="b5" x="-10%" y="-40%" width="120%" height="180%"><feGaussianBlur stdDeviation="2.4"/></filter><filter id="b6" x="-10%" y="-40%" width="120%" height="180%"><feGaussianBlur stdDeviation="1.1"/></filter></defs><rect width="150" height="100" fill="url(#b1)"/><rect y="-3" width="150" height="84" fill="url(#b2)"/><path d="M0,41 C10,41 22,44 34,49 C44,52 54,54 60,56 L0,57 Z" fill="#eeeef6" filter="url(#b5)"/><rect y="59" width="150" height="41" fill="url(#b3)"/><path d="M0,53 C20,54 40,55 56,54 C64,51 74,51 82,54 C100,56 126,55 150,51 L150,60 L0,60 Z" fill="url(#b4)" filter="url(#b6)"/><ellipse cx="88" cy="39" rx="5" ry="1.500" fill="#eeeef6" opacity="0.6" filter="url(#b6)"/><path d="M124,59 C132,55 142,54 150,53 L150,72 C144,66 136,61 124,60 Z" fill="#8e7c86" filter="url(#b6)"/><path d="M112,61 C96,66 70,74 46,84 L58,90 C70,92 80,96 86,98 C100,90 125,78 141,70 C137,65 124,61 112,61 Z" fill="#e6ecf4" filter="url(#b5)"/><path d="M124,61 C132,63 139,67 143,72 L150,70 C144,65 134,61 128,60 Z" fill="#c4b4ac" filter="url(#b6)"/><path d="M0,78 C10,76 28,76 38,78 C42,81 44,84 48,86.500 C60,85 72,90 84,97.500 L90,97.500 C104,90 128,76 150,70 L150,100 L0,100 Z" fill="url(#b7)"/><path d="M0,78 C10,76.500 28,76 38,78.500 C42,81 44,84 48,87 C36,87 16,87 0,88.500 Z" fill="#85845c"/></svg>
<div style="position:absolute;left:265.80px;top:89.60px;width:94.20px;height:63.30px;background:#2e2e2e;"></div>
<svg style="position:absolute;left:266.40px;top:90.20px;" width="93.00" height="62.10" viewBox="0 0 150 100" preserveAspectRatio="none"><defs><linearGradient id="b8" gradientUnits="userSpaceOnUse" x1="118" y1="0" x2="78" y2="60"><stop offset="0" stop-color="#7f92be"/><stop offset="0.55" stop-color="#9cadd0"/><stop offset="1" stop-color="#c0c8da"/></linearGradient><radialGradient id="b9" cx="0" cy="0.5" r="0.5" gradientTransform="translate(0 0.5) scale(1.0 0.6) translate(0 -0.5)"><stop offset="0" stop-color="#e4e4ec" stop-opacity="0.9"/><stop offset="0.3" stop-color="#e4e4ec" stop-opacity="0.7200000000000001"/><stop offset="0.65" stop-color="#e4e4ec" stop-opacity="0.25200000000000006"/><stop offset="1" stop-color="#e4e4ec" stop-opacity="0"/></radialGradient><linearGradient id="b10" x1="0" y1="0" x2="0" y2="1"><stop offset="0" stop-color="#86969c"/><stop offset="1" stop-color="#8a9aa2"/></linearGradient><linearGradient id="b11" x1="0" y1="0" x2="1" y2="0"><stop offset="0" stop-color="#8a8ca4"/><stop offset="0.4" stop-color="#8a8ca4"/><stop offset="1" stop-color="#7c84a0"/></linearGradient><linearGradient id="b14" x1="0" y1="0" x2="1" y2="0"><stop offset="0" stop-color="#2b291d"/><stop offset="0.5" stop-color="#2b291d"/><stop offset="1" stop-color="#35332a"/></linearGradient><filter id="b12" x="-10%" y="-40%" width="120%" height="180%"><feGaussianBlur stdDeviation="2.4"/></filter><filter id="b13" x="-10%" y="-40%" width="120%" height="180%"><feGaussianBlur stdDeviation="1.1"/></filter></defs><rect width="150" height="100" fill="url(#b8)"/><rect y="-3" width="150" height="84" fill="url(#b9)"/><path d="M0,41 C10,41 22,44 34,49 C44,52 54,54 60,56 L0,57 Z" fill="#aaa6b2" filter="url(#b12)"/><rect y="59" width="150" height="41" fill="url(#b10)"/><path d="M0,53 C20,54 40,55 56,54 C64,51 74,51 82,54 C100,56 126,55 150,51 L150,60 L0,60 Z" fill="url(#b11)" filter="url(#b13)"/><ellipse cx="88" cy="39" rx="5" ry="1.500" fill="#aaa6b2" opacity="0.6" filter="url(#b13)"/><path d="M124,59 C132,55 142,54 150,53 L150,72 C144,66 136,61 124,60 Z" fill="#443e48" filter="url(#b13)"/><path d="M112,61 C96,66 70,74 46,84 L58,90 C70,92 80,96 86,98 C100,90 125,78 141,70 C137,65 124,61 112,61 Z" fill="#b0bac6" filter="url(#b12)"/><path d="M124,61 C132,63 139,67 143,72 L150,70 C144,65 134,61 128,60 Z" fill="#8a8484" filter="url(#b13)"/><path d="M0,78 C10,76 28,76 38,78 C42,81 44,84 48,86.500 C60,85 72,90 84,97.500 L90,97.500 C104,90 128,69 150,63 L150,100 L0,100 Z" fill="url(#b14)"/><path d="M0,78 C10,76.500 28,76 38,78.500 C42,81 44,84 48,87 C36,87 16,87 0,88.500 Z" fill="#1c1e18"/></svg>
<div style="position:absolute;left:367.80px;top:89.60px;width:94.50px;height:63.30px;background:#2e2e2e;"></div>
<svg style="position:absolute;left:368.40px;top:90.20px;" width="93.30" height="62.10" viewBox="0 0 150 100" preserveAspectRatio="none"><defs><linearGradient id="b15" gradientUnits="userSpaceOnUse" x1="118" y1="0" x2="78" y2="60"><stop offset="0" stop-color="#252e46"/><stop offset="0.55" stop-color="#2b354c"/><stop offset="1" stop-color="#363e52"/></linearGradient><radialGradient id="b16" cx="0" cy="0.5" r="0.5" gradientTransform="translate(0 0.5) scale(1.0 0.6) translate(0 -0.5)"><stop offset="0" stop-color="#56565e" stop-opacity="0.6"/><stop offset="0.3" stop-color="#56565e" stop-opacity="0.48"/><stop offset="0.65" stop-color="#56565e" stop-opacity="0.168"/><stop offset="1" stop-color="#56565e" stop-opacity="0"/></radialGradient><linearGradient id="b17" x1="0" y1="0" x2="0" y2="1"><stop offset="0" stop-color="#1e2026"/><stop offset="1" stop-color="#191b1f"/></linearGradient><linearGradient id="b18" x1="0" y1="0" x2="1" y2="0"><stop offset="0" stop-color="#2a2c38"/><stop offset="0.4" stop-color="#2a2c38"/><stop offset="1" stop-color="#262a3c"/></linearGradient><linearGradient id="b21" x1="0" y1="0" x2="1" y2="0"><stop offset="0" stop-color="#101010"/><stop offset="0.5" stop-color="#101010"/><stop offset="1" stop-color="#131313"/></linearGradient><filter id="b19" x="-10%" y="-40%" width="120%" height="180%"><feGaussianBlur stdDeviation="2.4"/></filter><filter id="b20" x="-10%" y="-40%" width="120%" height="180%"><feGaussianBlur stdDeviation="1.1"/></filter></defs><rect width="150" height="100" fill="url(#b15)"/><rect y="-3" width="150" height="84" fill="url(#b16)"/><path d="M0,41 C10,41 22,44 34,49 C44,52 54,54 60,56 L0,57 Z" fill="#46434a" filter="url(#b19)"/><rect y="59" width="150" height="41" fill="url(#b17)"/><path d="M0,53 C20,54 40,55 56,54 C64,51 74,51 82,54 C100,56 126,55 150,51 L150,60 L0,60 Z" fill="url(#b18)" filter="url(#b20)"/><ellipse cx="88" cy="39" rx="5" ry="1.500" fill="#46434a" opacity="0.6" filter="url(#b20)"/><path d="M124,59 C132,55 142,54 150,53 L150,72 C144,66 136,61 124,60 Z" fill="#16181d" filter="url(#b20)"/><path d="M112,61 C96,66 70,74 46,84 L58,90 C70,92 80,96 86,98 C100,90 125,78 141,70 C137,65 124,61 112,61 Z" fill="#242830" filter="url(#b19)"/><path d="M124,61 C132,63 139,67 143,72 L150,70 C144,65 134,61 128,60 Z" fill="#1e1e22" filter="url(#b20)"/><path d="M0,78 C10,76 28,76 38,78 C42,81 44,84 48,86.500 C60,85 72,90 84,97.500 L90,97.500 C104,90 128,69 150,63 L150,100 L0,100 Z" fill="url(#b21)"/><path d="M0,78 C10,76.500 28,76 38,78.500 C42,81 44,84 48,87 C36,87 16,87 0,88.500 Z" fill="#0c0c0c"/></svg>
<div style="position:absolute;left:469.20px;top:89.00px;width:95.10px;height:64.20px;background:#8e8e8e;"></div>
<div style="position:absolute;left:469.90px;top:89.70px;width:93.70px;height:62.80px;background:#f2f2f2;"></div>
<svg style="position:absolute;left:471.60px;top:91.40px;" width="90.60" height="60.00" viewBox="0 0 150 100" preserveAspectRatio="none"><defs><linearGradient id="b22" gradientUnits="userSpaceOnUse" x1="118" y1="0" x2="78" y2="60"><stop offset="0" stop-color="#3768b0"/><stop offset="0.55" stop-color="#5f8ed0"/><stop offset="1" stop-color="#a4c0e4"/></linearGradient><radialGradient id="b23" cx="0" cy="0.5" r="0.5" gradientTransform="translate(0 0.5) scale(1.0 0.6) translate(0 -0.5)"><stop offset="0" stop-color="#f6f4f2" stop-opacity="1.0"/><stop offset="0.3" stop-color="#f6f4f2" stop-opacity="0.8"/><stop offset="0.65" stop-color="#f6f4f2" stop-opacity="0.28"/><stop offset="1" stop-color="#f6f4f2" stop-opacity="0"/></radialGradient><linearGradient id="b24" x1="0" y1="0" x2="0" y2="1"><stop offset="0" stop-color="#5e7a86"/><stop offset="1" stop-color="#70909c"/></linearGradient><linearGradient id="b25" x1="0" y1="0" x2="1" y2="0"><stop offset="0" stop-color="#565e7e"/><stop offset="0.4" stop-color="#565e7e"/><stop offset="1" stop-color="#5a6a96"/></linearGradient><linearGradient id="b28" x1="0" y1="0" x2="1" y2="0"><stop offset="0" stop-color="#5c6930"/><stop offset="0.5" stop-color="#5c6930"/><stop offset="1" stop-color="#707c36"/></linearGradient><filter id="b26" x="-10%" y="-40%" width="120%" height="180%"><feGaussianBlur stdDeviation="2.4"/></filter><filter id="b27" x="-10%" y="-40%" width="120%" height="180%"><feGaussianBlur stdDeviation="1.1"/></filter></defs><rect width="150" height="100" fill="url(#b22)"/><rect y="-3" width="150" height="84" fill="url(#b23)"/><path d="M0,41 C10,41 22,44 34,49 C44,52 54,54 60,56 L0,57 Z" fill="#94867e" filter="url(#b26)"/><rect y="59" width="150" height="41" fill="url(#b24)"/><path d="M0,53 C20,54 40,55 56,54 C64,51 74,51 82,54 C100,56 126,55 150,51 L150,60 L0,60 Z" fill="url(#b25)" filter="url(#b27)"/><ellipse cx="88" cy="39" rx="5" ry="1.500" fill="#94867e" opacity="0.6" filter="url(#b27)"/><path d="M124,59 C132,55 142,54 150,53 L150,72 C144,66 136,61 124,60 Z" fill="#5c4c5e" filter="url(#b27)"/><path d="M112,61 C96,66 70,74 46,84 L58,90 C70,92 80,96 86,98 C100,90 125,78 141,70 C137,65 124,61 112,61 Z" fill="#a4b8cc" filter="url(#b26)"/><path d="M124,61 C132,63 139,67 143,72 L150,70 C144,65 134,61 128,60 Z" fill="#b4a696" filter="url(#b27)"/><path d="M0,78 C10,76 28,76 38,78 C42,81 44,84 48,86.500 C60,85 72,90 84,97.500 L90,97.500 C104,90 128,76 150,70 L150,100 L0,100 Z" fill="url(#b28)"/><path d="M0,78 C10,76.500 28,76 38,78.500 C42,81 44,84 48,87 C36,87 16,87 0,88.500 Z" fill="#2b3a2a"/></svg>
<div style="position:absolute;left:552.60px;top:147.20px;width:4.20px;height:3.80px;background:#2a2a2a;border:0.4px solid #bbb;box-sizing:border-box;"></div>
<div style="position:absolute;left:557.40px;top:147.20px;width:4.20px;height:3.80px;background:#2a2a2a;border:0.4px solid #bbb;box-sizing:border-box;"></div>
<div style="position:absolute;left:163.90px;top:216.60px;width:94.30px;height:63.40px;background:#2e2e2e;"></div>
<svg style="position:absolute;left:164.50px;top:217.20px;" width="93.10" height="62.20" viewBox="0 0 150 100" preserveAspectRatio="none"><defs><linearGradient id="b29" x1="0" y1="0" x2="0.2" y2="1"><stop offset="0" stop-color="#6f92c8"/><stop offset="0.5" stop-color="#a9bddc"/><stop offset="0.6" stop-color="#6a7890"/><stop offset="1" stop-color="#3a3c30"/></linearGradient><filter id="b30"><feGaussianBlur stdDeviation="1.6"/></filter></defs><rect width="150" height="100" fill="url(#b29)"/><path d="M60,46 C90,44 120,48 150,44 L150,58 L60,58 Z" fill="#5a5f78" filter="url(#b30)"/></svg>
<div style="position:absolute;left:265.70px;top:216.60px;width:94.40px;height:63.40px;background:#2e2e2e;"></div>
<svg style="position:absolute;left:266.30px;top:217.20px;" width="93.20" height="62.20" viewBox="0 0 150 100" preserveAspectRatio="none"><defs><linearGradient id="b31" x1="0" y1="0" x2="0.15" y2="1"><stop offset="0" stop-color="#3b4762"/><stop offset="0.44" stop-color="#3b4358"/><stop offset="0.55" stop-color="#22252d"/><stop offset="0.68" stop-color="#131316"/><stop offset="1" stop-color="#101012"/></linearGradient><filter id="b32" x="-20%" y="-50%" width="140%" height="200%"><feGaussianBlur stdDeviation="2"/></filter></defs><rect width="150" height="100" fill="url(#b31)"/><path d="M10,42 C40,40 70,47 100,47 C120,47 140,44 150,42 L150,55 L10,55 Z" fill="#2c3140" filter="url(#b32)"/><path d="M138,50 C112,55 84,61 62,69 L74,74 C100,65 128,59 148,55 Z" fill="#3c4456" filter="url(#b32)"/><path d="M0,78 C30,74 50,84 70,86 C100,84 130,76 150,66 L150,100 L0,100 Z" fill="#0f0f11"/><path d="M0,0 L5,0 C8,8 11,20 11.500,40 C12,60 10,80 8,100 L0,100 Z" fill="#14161b"/></svg>
<div style="position:absolute;left:383.40px;top:201.60px;width:63.30px;height:93.40px;background:#2e2e2e;"></div>
<svg style="position:absolute;left:384.00px;top:202.20px;" width="62.10" height="92.20" viewBox="0 0 100 150" preserveAspectRatio="none"><defs><linearGradient id="b33" gradientUnits="userSpaceOnUse" x1="62" y1="0" x2="36" y2="72"><stop offset="0" stop-color="#2c62b6"/><stop offset="0.6" stop-color="#5686d0"/><stop offset="1" stop-color="#a2bee8"/></linearGradient><linearGradient id="b34" x1="0" y1="0" x2="0" y2="1"><stop offset="0" stop-color="#5a8aa0"/><stop offset="1" stop-color="#86aac0"/></linearGradient><filter id="b35" x="-20%" y="-50%" width="140%" height="200%"><feGaussianBlur stdDeviation="2.200"/></filter><filter id="b36" x="-20%" y="-50%" width="140%" height="200%"><feGaussianBlur stdDeviation="1.200"/></filter></defs><rect width="100" height="150" fill="url(#b33)"/><ellipse cx="8" cy="60" rx="22" ry="8" fill="#c2d4f0" opacity="0.8" filter="url(#b35)"/><ellipse cx="56" cy="52" rx="11" ry="2.800" fill="#8c7cae" opacity="0.85" filter="url(#b36)"/><rect y="80" width="100" height="70" fill="url(#b34)"/><path d="M0,67 C12,65 24,66 32,70 C50,71 75,70 100,67 L100,81.500 L0,81.500 Z" fill="#4a5082" filter="url(#b36)"/><path d="M100,85 C75,88 40,96 0,106 L0,118 C40,112 75,104 100,98 Z" fill="#dbe6f0" filter="url(#b35)"/><path d="M100,96 C74,104 44,112 22,118 L52,130 L100,108 Z" fill="#a08e8c" filter="url(#b36)"/><path d="M0,115 C20,116 38,121 54,128.500 C68,122 86,112 100,106 L100,150 L0,150 Z" fill="#6c6a39"/><path d="M0,134 C30,132 60,140 100,136 L100,150 L0,150 Z" fill="#56562c" opacity="0.700" filter="url(#b36)"/></svg>
<div style="position:absolute;left:436.20px;top:290.00px;width:3.80px;height:3.60px;background:#2a2a2a;border:0.4px solid #aaa;box-sizing:border-box;"></div>
<div style="position:absolute;left:441.00px;top:290.00px;width:3.80px;height:3.60px;background:#2a2a2a;border:0.4px solid #aaa;box-sizing:border-box;"></div>
<div style="position:absolute;left:469.50px;top:216.90px;width:94.70px;height:63.10px;background:#2e2e2e;"></div>
<svg style="position:absolute;left:470.10px;top:217.50px;" width="93.50" height="61.90" viewBox="0 0 150 100" preserveAspectRatio="none"><defs><filter id="b37" x="-20%" y="-50%" width="140%" height="200%"><feGaussianBlur stdDeviation="1.600"/></filter></defs><rect width="150" height="100" fill="#f9f9fb"/><path d="M150,47 C142,48 134,52 126,57 L150,62 Z" fill="#b4a8b0" filter="url(#b37)"/><path d="M22,56 C60,52 100,52 132,57 C120,66 100,72 84,80 L22,78 Z" fill="#e6eaf0" filter="url(#b37)"/><path d="M134,58 C120,66 100,74 86,82 L120,80 L144,64 Z" fill="#d2c8c2" filter="url(#b37)"/><path d="M17,69 C26,66 38,67 45,75 C54,75 64,76 72,78 C78,81 84,83 90,82 C106,76 130,70 150,66 L150,100 L0,100 L0,76 Z" fill="#89885f"/><path d="M17,69 C26,66 38,67 46,75.500 L19,79 Z" fill="#596046"/><path d="M0,0 L13,0 C15,10 18,24 19,40 C20,60 17,80 15,100 L0,100 Z" fill="#3c4456"/><path d="M3,0 C8,16 11,36 10,56 C9,76 8,90 6,100" stroke="#5c667c" stroke-width="4" fill="none" opacity="0.600" filter="url(#b37)"/><path d="M0,27 L17,25 M0,48 L19,47 M0,70 L19,68 M0,88 L16,88" stroke="#1c212b" stroke-width="1.800" fill="none" filter="url(#b37)"/></svg>
<div style="position:absolute;left:163.90px;top:343.70px;width:94.40px;height:63.60px;background:#2e2e2e;"></div>
<svg style="position:absolute;left:164.50px;top:344.30px;" width="93.20" height="62.40" viewBox="0 0 150 100" preserveAspectRatio="none"><defs><linearGradient id="b38" x1="0.2" y1="0" x2="0.45" y2="1"><stop offset="0" stop-color="#c8ccde"/><stop offset="1" stop-color="#98a4be"/></linearGradient><linearGradient id="b39" x1="0" y1="0" x2="0" y2="1"><stop offset="0" stop-color="#98a4be"/><stop offset="0.25" stop-color="#8898ae"/><stop offset="1" stop-color="#7c8ea6"/></linearGradient><filter id="b40"><feGaussianBlur stdDeviation="0.800"/></filter></defs><rect width="150" height="100" fill="url(#b38)"/><rect y="62" width="150" height="38" fill="url(#b39)"/><path d="M50,66.0 L84,65.5 C88,63.0 90,60.0 94,59.8 L110,59.8 C112,61.0 113,63.0 115,64.0 L117,60.5 L119,63.0 L128,65.5 L128,67.0 L50,67.5 Z" fill="#3e3e40" filter="url(#b40)"/><path d="M0,56.0 C3,57.0 5,60.0 7,61.5 C10,64.0 12,66.0 15,66.5 L30,66.5 C36,70.0 44,76.0 48,79.0 L48,81.0 L34,81.0 C36,84.0 38,88.0 35,90.5 L0,101.0 Z" fill="#2c2a28" filter="url(#b40)"/><path d="M22,67.0 L30,66.5 C36,70.0 44,76.0 48,79.0 L30,74.0 Z" fill="#4a4840" opacity="0.5"/><path d="M0,90 C30,91 70,95 103,100 L0,100 Z" fill="#6a6250"/></svg>
<div style="position:absolute;left:265.70px;top:343.70px;width:94.40px;height:63.60px;background:#2e2e2e;"></div>
<svg style="position:absolute;left:266.30px;top:344.30px;" width="93.20" height="62.40" viewBox="0 0 150 100" preserveAspectRatio="none"><defs><linearGradient id="b42" x1="0.2" y1="0" x2="0.45" y2="1"><stop offset="0" stop-color="#2c3040"/><stop offset="1" stop-color="#242836"/></linearGradient><linearGradient id="b43" x1="0" y1="0" x2="0" y2="1"><stop offset="0" stop-color="#242836"/><stop offset="0.25" stop-color="#1f232d"/><stop offset="1" stop-color="#17191f"/></linearGradient><filter id="b44"><feGaussianBlur stdDeviation="0.800"/></filter></defs><rect width="150" height="100" fill="url(#b42)"/><rect y="62" width="150" height="38" fill="url(#b43)"/><path d="M50,66.0 L84,65.5 C88,63.0 90,60.0 94,59.8 L110,59.8 C112,61.0 113,63.0 115,64.0 L117,60.5 L119,63.0 L128,65.5 L128,67.0 L50,67.5 Z" fill="#101114" filter="url(#b44)"/><path d="M0,56.0 C3,57.0 5,60.0 7,61.5 C10,64.0 12,66.0 15,66.5 L30,66.5 C36,70.0 44,76.0 48,79.0 L48,81.0 L34,81.0 C36,84.0 38,88.0 35,90.5 L0,101.0 Z" fill="#0d0d0f" filter="url(#b44)"/><path d="M22,67.0 L30,66.5 C36,70.0 44,76.0 48,79.0 L30,74.0 Z" fill="#141418" opacity="0.5"/><path d="M0,90 C30,91 70,95 103,100 L0,100 Z" fill="#121214"/></svg>
<div style="position:absolute;left:367.70px;top:348.70px;width:94.70px;height:53.40px;background:#2e2e2e;"></div>
<svg style="position:absolute;left:368.30px;top:349.30px;" width="93.50" height="52.20" viewBox="0 0 150 100" preserveAspectRatio="none"><defs><linearGradient id="b46" x1="0.2" y1="0" x2="0.45" y2="1"><stop offset="0" stop-color="#4c6296"/><stop offset="1" stop-color="#88a2cc"/></linearGradient><linearGradient id="b47" x1="0" y1="0" x2="0" y2="1"><stop offset="0" stop-color="#88a2cc"/><stop offset="0.25" stop-color="#6e8eb6"/><stop offset="1" stop-color="#6282aa"/></linearGradient><filter id="b48"><feGaussianBlur stdDeviation="0.800"/></filter></defs><rect width="150" height="100" fill="url(#b46)"/><rect y="64" width="150" height="36" fill="url(#b47)"/><path d="M50,68.4 L84,67.8 C88,64.8 90,61.2 94,60.959999999999994 L110,60.959999999999994 C112,62.4 113,64.8 115,66.0 L117,61.8 L119,64.8 L128,67.8 L128,69.6 L50,70.2 Z" fill="#36363a" filter="url(#b48)"/><path d="M0,56.4 C3,57.6 5,61.2 7,63.0 C10,66.0 12,68.4 15,69.0 L30,69.0 C36,73.2 44,80.4 48,84.0 L48,86.4 L34,86.4 C36,90.0 38,94.8 35,97.8 L0,110.4 Z" fill="#38382e" filter="url(#b48)"/><path d="M22,69.6 L30,69.0 C36,73.2 44,80.4 48,84.0 L30,78.0 Z" fill="#56543c" opacity="0.5"/></svg>
<div style="position:absolute;left:452.00px;top:397.00px;width:3.80px;height:3.60px;background:#2a2a2a;border:0.4px solid #aaa;box-sizing:border-box;"></div>
<div style="position:absolute;left:456.80px;top:397.00px;width:3.80px;height:3.60px;background:#2a2a2a;border:0.4px solid #aaa;box-sizing:border-box;"></div>
<div style="position:absolute;left:469.50px;top:344.00px;width:94.70px;height:63.30px;background:#2e2e2e;"></div>
<svg style="position:absolute;left:470.10px;top:344.60px;" width="93.50" height="62.10" viewBox="0 0 150 100" preserveAspectRatio="none"><defs><linearGradient id="b50" x1="0.2" y1="0" x2="0.45" y2="1"><stop offset="0" stop-color="#fcfcfe"/><stop offset="1" stop-color="#f7f7fb"/></linearGradient><linearGradient id="b51" x1="0" y1="0" x2="0" y2="1"><stop offset="0" stop-color="#f7f7fb"/><stop offset="0.25" stop-color="#f0f2f8"/><stop offset="1" stop-color="#eef0f6"/></linearGradient><filter id="b52"><feGaussianBlur stdDeviation="0.800"/></filter></defs><rect width="150" height="100" fill="url(#b50)"/><rect y="62" width="150" height="38" fill="url(#b51)"/><path d="M50,66.0 L84,65.5 C88,63.0 90,60.0 94,59.8 L110,59.8 C112,61.0 113,63.0 115,64.0 L117,60.5 L119,63.0 L128,65.5 L128,67.0 L50,67.5 Z" fill="#dcdce4" filter="url(#b52)"/><path d="M0,56.0 C3,57.0 5,60.0 7,61.5 C10,64.0 12,66.0 15,66.5 L30,66.5 C36,70.0 44,76.0 48,79.0 L48,81.0 L34,81.0 C36,84.0 38,88.0 35,90.5 L0,101.0 Z" fill="#a69e98" filter="url(#b52)"/><path d="M22,67.0 L30,66.5 C36,70.0 44,76.0 48,79.0 L30,74.0 Z" fill="#c8c0b8" opacity="0.5"/><path d="M0,90 C30,91 70,95 103,100 L0,100 Z" fill="#ece2d0"/></svg>
<div style="position:absolute;left:197.30px;top:176.90px;width:1.00px;height:1.00px;background:#6a6a6a;border-radius:0.5px;"></div><div style="position:absolute;left:203.80px;top:176.90px;width:1.00px;height:1.00px;background:#6a6a6a;border-radius:0.5px;"></div><div style="position:absolute;left:210.30px;top:176.90px;width:1.00px;height:1.00px;background:#6a6a6a;border-radius:0.5px;"></div><div style="position:absolute;left:216.80px;top:176.90px;width:1.00px;height:1.00px;background:#6a6a6a;border-radius:0.5px;"></div><div style="position:absolute;left:223.30px;top:176.90px;width:1.00px;height:1.00px;background:#6a6a6a;border-radius:0.5px;"></div>
<div style="position:absolute;left:298.90px;top:176.90px;width:1.00px;height:1.00px;background:#6a6a6a;border-radius:0.5px;"></div><div style="position:absolute;left:305.40px;top:176.90px;width:1.00px;height:1.00px;background:#6a6a6a;border-radius:0.5px;"></div><div style="position:absolute;left:311.90px;top:176.90px;width:1.00px;height:1.00px;background:#6a6a6a;border-radius:0.5px;"></div><div style="position:absolute;left:318.40px;top:176.90px;width:1.00px;height:1.00px;background:#6a6a6a;border-radius:0.5px;"></div><div style="position:absolute;left:324.90px;top:176.90px;width:1.00px;height:1.00px;background:#6a6a6a;border-radius:0.5px;"></div>
<div style="position:absolute;left:400.70px;top:176.90px;width:1.00px;height:1.00px;background:#6a6a6a;border-radius:0.5px;"></div><div style="position:absolute;left:407.20px;top:176.90px;width:1.00px;height:1.00px;background:#6a6a6a;border-radius:0.5px;"></div><div style="position:absolute;left:413.70px;top:176.90px;width:1.00px;height:1.00px;background:#6a6a6a;border-radius:0.5px;"></div><div style="position:absolute;left:420.20px;top:176.90px;width:1.00px;height:1.00px;background:#6a6a6a;border-radius:0.5px;"></div><div style="position:absolute;left:426.70px;top:176.90px;width:1.00px;height:1.00px;background:#6a6a6a;border-radius:0.5px;"></div>
<span style="position:absolute;top:174.11px;font-size:7.20px;line-height:1;color:#1a1a1a;white-space:pre;left:404.00px;width:200px;text-align:center;font-family:'DejaVu Sans',sans-serif;">★</span><span style="position:absolute;top:174.11px;font-size:7.20px;line-height:1;color:#1a1a1a;white-space:pre;left:410.30px;width:200px;text-align:center;font-family:'DejaVu Sans',sans-serif;">★</span><span style="position:absolute;top:174.11px;font-size:7.20px;line-height:1;color:#1a1a1a;white-space:pre;left:416.60px;width:200px;text-align:center;font-family:'DejaVu Sans',sans-serif;">★</span><span style="position:absolute;top:174.11px;font-size:7.20px;line-height:1;color:#1a1a1a;white-space:pre;left:422.90px;width:200px;text-align:center;font-family:'DejaVu Sans',sans-serif;">★</span><span style="position:absolute;top:174.11px;font-size:7.20px;line-height:1;color:#1a1a1a;white-space:pre;left:429.20px;width:200px;text-align:center;font-family:'DejaVu Sans',sans-serif;">★</span>
<div style="position:absolute;left:197.30px;top:304.10px;width:1.00px;height:1.00px;background:#6a6a6a;border-radius:0.5px;"></div><div style="position:absolute;left:203.80px;top:304.10px;width:1.00px;height:1.00px;background:#6a6a6a;border-radius:0.5px;"></div><div style="position:absolute;left:210.30px;top:304.10px;width:1.00px;height:1.00px;background:#6a6a6a;border-radius:0.5px;"></div><div style="position:absolute;left:216.80px;top:304.10px;width:1.00px;height:1.00px;background:#6a6a6a;border-radius:0.5px;"></div><div style="position:absolute;left:223.30px;top:304.10px;width:1.00px;height:1.00px;background:#6a6a6a;border-radius:0.5px;"></div>
<div style="position:absolute;left:298.90px;top:304.10px;width:1.00px;height:1.00px;background:#6a6a6a;border-radius:0.5px;"></div><div style="position:absolute;left:305.40px;top:304.10px;width:1.00px;height:1.00px;background:#6a6a6a;border-radius:0.5px;"></div><div style="position:absolute;left:311.90px;top:304.10px;width:1.00px;height:1.00px;background:#6a6a6a;border-radius:0.5px;"></div><div style="position:absolute;left:318.40px;top:304.10px;width:1.00px;height:1.00px;background:#6a6a6a;border-radius:0.5px;"></div><div style="position:absolute;left:324.90px;top:304.10px;width:1.00px;height:1.00px;background:#6a6a6a;border-radius:0.5px;"></div>
<div style="position:absolute;left:502.90px;top:304.10px;width:1.00px;height:1.00px;background:#6a6a6a;border-radius:0.5px;"></div><div style="position:absolute;left:509.40px;top:304.10px;width:1.00px;height:1.00px;background:#6a6a6a;border-radius:0.5px;"></div><div style="position:absolute;left:515.90px;top:304.10px;width:1.00px;height:1.00px;background:#6a6a6a;border-radius:0.5px;"></div><div style="position:absolute;left:522.40px;top:304.10px;width:1.00px;height:1.00px;background:#6a6a6a;border-radius:0.5px;"></div><div style="position:absolute;left:528.90px;top:304.10px;width:1.00px;height:1.00px;background:#6a6a6a;border-radius:0.5px;"></div>
<span style="position:absolute;top:301.41px;font-size:7.20px;line-height:1;color:#1a1a1a;white-space:pre;left:302.00px;width:200px;text-align:center;font-family:'DejaVu Sans',sans-serif;">★</span><span style="position:absolute;top:301.41px;font-size:7.20px;line-height:1;color:#1a1a1a;white-space:pre;left:308.30px;width:200px;text-align:center;font-family:'DejaVu Sans',sans-serif;">★</span><span style="position:absolute;top:301.41px;font-size:7.20px;line-height:1;color:#1a1a1a;white-space:pre;left:314.60px;width:200px;text-align:center;font-family:'DejaVu Sans',sans-serif;">★</span><span style="position:absolute;top:301.41px;font-size:7.20px;line-height:1;color:#1a1a1a;white-space:pre;left:320.90px;width:200px;text-align:center;font-family:'DejaVu Sans',sans-serif;">★</span><span style="position:absolute;top:301.41px;font-size:7.20px;line-height:1;color:#1a1a1a;white-space:pre;left:327.20px;width:200px;text-align:center;font-family:'DejaVu Sans',sans-serif;">★</span>
<div style="position:absolute;left:160.50px;top:427.00px;width:413.80px;height:17.60px;background:linear-gradient(#646464,#565656);"></div>
<div style="position:absolute;left:160.50px;top:426.60px;width:413.80px;height:0.80px;background:#3a3a3a;"></div>
<svg style="position:absolute;left:160px;top:427px" width="415" height="18" viewBox="160 427 415 18"><rect x="164.20" y="432.60" width="2.3" height="2" fill="#f2f2f2"/><rect x="164.20" y="435.20" width="2.3" height="2" fill="#f2f2f2"/><rect x="164.20" y="437.80" width="2.3" height="2" fill="#f2f2f2"/><rect x="167.15" y="432.60" width="2.3" height="2" fill="#f2f2f2"/><rect x="167.15" y="435.20" width="2.3" height="2" fill="#f2f2f2"/><rect x="167.15" y="437.80" width="2.3" height="2" fill="#f2f2f2"/><rect x="170.10" y="432.60" width="2.3" height="2" fill="#f2f2f2"/><rect x="170.10" y="435.20" width="2.3" height="2" fill="#f2f2f2"/><rect x="170.10" y="437.80" width="2.3" height="2" fill="#f2f2f2"/><rect x="173.05" y="432.60" width="2.3" height="2" fill="#f2f2f2"/><rect x="173.05" y="435.20" width="2.3" height="2" fill="#f2f2f2"/><rect x="173.05" y="437.80" width="2.3" height="2" fill="#f2f2f2"/><rect x="179.600" y="432.6" width="11.2" height="7.400" fill="#4a4a4a" stroke="#8a8a8a" stroke-width="0.700"/><rect x="181.400" y="434.2" width="7.600" height="4.200" fill="#5e5e5e" stroke="#2a2a2a" stroke-width="0.500"/><rect x="195.200" y="432.6" width="12.600" height="7.400" fill="#7a7a7a" stroke="#8a8a8a" stroke-width="0.600"/><rect x="201.200" y="432.6" width="0.600" height="7.400" fill="#4a4a4a"/><rect x="211.800" y="432.6" width="12" height="7.400" fill="#6a6a6a" stroke="#8a8a8a" stroke-width="0.600"/><rect x="213" y="433.600" width="3.600" height="5.400" fill="#8a8a8a"/><rect x="217.400" y="433.600" width="5.400" height="2.400" fill="#8a8a8a"/><rect x="217.400" y="436.800" width="5.400" height="2.200" fill="#8a8a8a"/><rect x="228.200" y="432.6" width="11.800" height="7.400" fill="#7c7c7c" stroke="#8a8a8a" stroke-width="0.600"/><circle cx="234.100" cy="436.6" r="2.300" fill="none" stroke="#4a4a4a" stroke-width="0.800"/><circle cx="234.100" cy="436.2" r="0.900" fill="#4a4a4a"/><rect x="246" y="429.500" width="0.500" height="13" fill="#4a4a4a"/><rect x="253.600" y="434.400" width="4.600" height="6.800" rx="1" fill="#4e4e4e" stroke="#404040" stroke-width="0.500"/><rect x="254.800" y="431.400" width="2.200" height="3" fill="#4e4e4e" stroke="#404040" stroke-width="0.400"/><rect x="254.700" y="436" width="2.400" height="3" fill="#3c3c3c"/><rect x="265.400" y="429.500" width="0.500" height="13" fill="#4a4a4a"/><path d="M271.600,432.600 v7.200 m-1.300,-1.600 l1.300,1.800 l1.300,-1.800 M280.200,439.800 v-7.200 m-1.300,1.600 l1.300,-1.800 l1.300,1.800" stroke="#3e3e3e" stroke-width="0.700" fill="none"/><path d="M351.400,432.800 V440.600" stroke="#444" stroke-width="0.800"/><path d="M351.600,432.800 H357 V437 H351.600Z" fill="#474747"/><path d="M361,432.800 V440.600" stroke="#444" stroke-width="0.800"/><path d="M361.200,433.200 H365.800 V436.800 H361.200Z" fill="none" stroke="#474747" stroke-width="0.800"/><rect x="345.400" y="429.500" width="0.500" height="13" fill="#4a4a4a"/><rect x="369.800" y="429.500" width="0.500" height="13" fill="#4a4a4a"/><rect x="410.200" y="429.500" width="0.500" height="13" fill="#4a4a4a"/><rect x="454" y="429.500" width="0.500" height="13" fill="#4a4a4a"/><rect x="561" y="429.500" width="0.500" height="13" fill="#4a4a4a"/><rect x="413.70" y="433.600" width="5.200" height="5.200" rx="0.800" fill="#d94a4a"/><rect x="421.75" y="433.600" width="5.200" height="5.200" rx="0.800" fill="#dcd23a"/><rect x="429.80" y="433.600" width="5.200" height="5.200" rx="0.800" fill="#5cc04a"/><rect x="437.85" y="433.600" width="5.200" height="5.200" rx="0.800" fill="#4a86e0"/><rect x="445.90" y="433.600" width="5.200" height="5.200" rx="0.800" fill="#8a4ae0"/><rect x="519.700" y="441" width="37" height="0.900" fill="#3c3c3c"/><path d="M537.800,438.800 L540.200,441.400 V443.200 H535.400 V441.400Z" fill="#e6e6e6"/><path d="M564.800,434.600 L570,434.600 L567.400,437.600Z" fill="#4a4a4a"/></svg>
<span style="position:absolute;top:434.18px;font-size:4.40px;line-height:1;color:#4a4a4a;white-space:pre;left:98.30px;width:200px;text-align:center;font-weight:bold;">X</span>
<span style="position:absolute;top:434.18px;font-size:4.40px;line-height:1;color:#4a4a4a;white-space:pre;left:104.70px;width:200px;text-align:center;font-weight:bold;">Y</span>
<span style="position:absolute;top:432.82px;font-size:3.00px;line-height:1;color:#3e3e3e;white-space:pre;left:175.90px;width:200px;text-align:center;font-weight:bold;">A</span>
<span style="position:absolute;top:437.02px;font-size:3.00px;line-height:1;color:#3e3e3e;white-space:pre;left:175.90px;width:200px;text-align:center;font-weight:bold;">Z</span>
<span style="position:absolute;top:434.66px;font-size:5.40px;line-height:1;color:#8c8c8c;white-space:pre;left:286.00px;transform:scaleX(0.7892);transform-origin:0 50%;">Sort:</span>
<span style="position:absolute;top:434.66px;font-size:5.40px;line-height:1;color:#f0f0f0;white-space:pre;left:298.00px;transform:scaleX(0.8237);transform-origin:0 50%;">Capture Time</span>
<svg style="position:absolute;left:328px;top:435px" width="2.400" height="4" viewBox="0 0 3 5"><path d="M0,2 L1.500,0 L3,2Z M0,3 L1.500,5 L3,3Z" fill="#7a7a7a"/></svg>
<span style="position:absolute;top:432.90px;font-size:7.60px;line-height:1;color:#ffffff;white-space:pre;left:276.60px;width:200px;text-align:center;font-family:'DejaVu Sans',sans-serif;">★</span><span style="position:absolute;top:432.90px;font-size:7.60px;line-height:1;color:#ffffff;white-space:pre;left:283.45px;width:200px;text-align:center;font-family:'DejaVu Sans',sans-serif;">★</span><span style="position:absolute;top:432.90px;font-size:7.60px;line-height:1;color:#ffffff;white-space:pre;left:290.30px;width:200px;text-align:center;font-family:'DejaVu Sans',sans-serif;">★</span><span style="position:absolute;top:432.90px;font-size:7.60px;line-height:1;color:#ffffff;white-space:pre;left:297.15px;width:200px;text-align:center;font-family:'DejaVu Sans',sans-serif;">★</span><span style="position:absolute;top:432.90px;font-size:7.60px;line-height:1;color:#ffffff;white-space:pre;left:304.00px;width:200px;text-align:center;font-family:'DejaVu Sans',sans-serif;">★</span>
<span style="position:absolute;top:431.76px;font-size:5.40px;line-height:1;color:#c4c4c4;white-space:pre;left:519.70px;transform:scaleX(0.8132);transform-origin:0 50%;">Thumbnails</span>
<svg style="position:absolute;left:347px;top:447.1px" width="4.8" height="3.2" viewBox="0 0 4 3"><path d="M0,3 L2,0 L4,3Z" fill="#c8c8c8"/></svg>
<div style="position:absolute;left:575.00px;top:40.00px;width:117.50px;height:405.00px;background:#1f1f1f;"></div>
<div style="position:absolute;left:577.50px;top:40.00px;width:109.00px;height:12.00px;background:#333333;"></div>
<span style="position:absolute;top:42.61px;font-size:7.00px;line-height:1;color:#c8c8c8;white-space:pre;left:648.00px;transform:scaleX(0.8465);transform-origin:0 50%;">Histogram</span>
<svg style="position:absolute;left:679.50px;top:44.30px" width="3.800" height="3.800" viewBox="0 0 4 4"><path d="M0,0 L4,0 L2,4Z" fill="#ececec"/></svg>
<div style="position:absolute;left:578.30px;top:52.00px;width:106.30px;height:58.80px;background:#484848;border:0.6px solid #5a5a5a;box-sizing:border-box;border-radius:1px;"></div>
<div style="position:absolute;left:580.80px;top:55.20px;width:101.20px;height:37.00px;background:#404040;border:0.5px solid #2c2c2c;box-sizing:border-box;"></div>
<svg style="position:absolute;left:581.1px;top:55.4px" width="100.7" height="36.5" viewBox="0 0 100.7 36.5"><path d="M0,36.5 L3.9,34.5 C7,32 10,29.800 12.4,29.400 C14,29 15.500,28.900 17,29 C19,29.400 21,30.200 23.200,30.900 L27,31.500 L55.300,28 L55.300,24.400 C56.400,23 57.600,21.800 58.700,21 C60.200,19.800 61.800,18.800 63.300,18.200 C65,17.600 66.500,17.700 68,17.900 C69.500,18.600 71,19.900 72.600,20.600 C74.200,20.700 75.800,20.200 77.300,19.800 L78.800,18.200 L79.500,13.500 L79.900,11.700 L80.300,14 L80.800,19.800 L81.800,22.500 L82.700,26 L84.200,28.300 L85.300,31 L86.500,33.700 L90,35 L100.700,36 L100.700,36.500Z" fill="#4f78ea"/><path d="M53.300,25.200 C55,25.800 57,27.200 58.700,28.300 C62,29 66,29.600 69.500,30 C72,30.300 75,31.200 78.800,32.300 L84,33.500 L84,36.500 L53.300,36.500Z" fill="#5cdde6"/><path d="M39.400,6.600 L40.200,6.200 C41.200,7 42.300,8.200 43.300,9 C44.400,9.600 45.400,10.400 46.400,11.300 C47.400,13 48.400,15.400 49.400,17.500 C50.400,19 51.500,20.300 52.500,21.300 C53.300,22.200 54.100,23 54.900,23.600 L55.300,28.300 L55.300,36.500 L39.400,36.500Z" fill="#3fb649"/><path d="M25.500,31 L27,29.800 C28,28 29,25.800 30.100,22.900 C30.800,20 31.500,16 32.100,12 C32.600,8 33.100,4 33.700,1.200 L34.800,0.500 L35.600,1.500 L36.300,0.900 L37.400,0.900 L38.400,3.500 L39.400,6.600 L40.200,7.400 L41,36.500 L25.500,36.500Z" fill="#d9353d"/><path d="M24,31.200 L25.500,30.900 C27,29.800 28.600,28 30.100,26 C31.400,23 32.700,20 34,16.700 C35.100,15 36.300,13.500 37.400,12 C38.300,10.500 39.300,9 40.200,7.400 C41.200,9.200 42.300,11.500 43.300,13.600 C44.300,15.800 45.400,17.900 46.400,19.800 C47.700,21.500 49,23 50.200,24.400 C51.200,25.500 52.300,26.600 53.300,27.500 L54.500,28.600 L54.500,36.500 L24,36.500Z" fill="#f2e53e"/><path d="M0,36.400 C4,35.400 8,34.200 12.400,33.200 C16.500,32.500 20.600,31.900 24.700,31.400 C28,31.200 31,31.100 34,30.900 C35.600,29.800 37,28.400 38.600,26.700 C40,25 41.800,22.800 43.300,22.100 C44.400,22.600 45.400,24 46.400,25.200 C48.400,26.200 50.400,26.900 52.500,27.500 C54.500,28.200 56.600,28.900 58.700,29.400 C62.300,30 66,30.500 69.500,30.900 C72.600,31.500 75.700,32.200 78.800,32.900 C81.400,33.300 84,33.700 86.500,34.100 C91,34.600 96,35.100 100.700,35.500 L100.700,36.500 L0,36.500Z" fill="#c6c6c6"/></svg>
<span style="position:absolute;top:93.67px;font-size:4.80px;line-height:1;color:#8e8e8e;white-space:pre;left:581.00px;transform:scaleX(0.8177);transform-origin:0 50%;">ISO 100</span>
<span style="position:absolute;top:93.67px;font-size:4.80px;line-height:1;color:#8e8e8e;white-space:pre;left:612.80px;transform:scaleX(0.8316);transform-origin:0 50%;">16 mm</span>
<span style="position:absolute;top:93.67px;font-size:4.80px;line-height:1;color:#8e8e8e;white-space:pre;left:638.70px;transform:scaleX(0.9745);transform-origin:0 50%;">f / 8.0</span>
<span style="position:absolute;top:93.22px;font-size:3.00px;line-height:1;color:#8e8e8e;white-space:pre;left:668.60px;">1</span>
<span style="position:absolute;top:93.68px;font-size:4.40px;line-height:1;color:#8e8e8e;white-space:pre;left:669.80px;">/</span>
<span style="position:absolute;top:96.02px;font-size:3.00px;line-height:1;color:#8e8e8e;white-space:pre;left:670.80px;transform:scaleX(0.6792);transform-origin:0 50%;">100</span>
<span style="position:absolute;top:93.67px;font-size:4.80px;line-height:1;color:#8e8e8e;white-space:pre;left:675.40px;transform:scaleX(0.8033);transform-origin:0 50%;">sec</span>
<div style="position:absolute;left:580.40px;top:103.00px;width:5.20px;height:4.00px;background:transparent;border:0.6px solid #1e1e1e;box-sizing:border-box;border-radius:0.5px;"></div>
<span style="position:absolute;top:102.21px;font-size:5.30px;line-height:1;color:#7e7e7e;white-space:pre;left:587.00px;transform:scaleX(0.8277);transform-origin:0 50%;">Original Photo</span>
<div style="position:absolute;left:688.50px;top:119.50px;width:3.00px;height:283.90px;background:#949494;border-radius:1.500px;"></div>
<svg style="position:absolute;left:694.6px;top:239.5px" width="2.5" height="4.6" viewBox="0 0 3 6"><path d="M0,0 L3,3 L0,6Z" fill="#8a8a8a"/></svg>
<div style="position:absolute;left:578.30px;top:114.80px;width:106.30px;height:86.20px;background:#484848;border:0.6px solid #5a5a5a;box-sizing:border-box;border-radius:1px;"></div>
<div style="position:absolute;left:578.60px;top:127.90px;width:105.70px;height:0.70px;background:#2e2e2e;"></div>
<div style="position:absolute;left:578.60px;top:141.10px;width:105.70px;height:0.70px;background:#2e2e2e;"></div>
<span style="position:absolute;top:119.66px;font-size:5.40px;line-height:1;color:#d8d8d8;white-space:pre;left:581.50px;transform:scaleX(0.7866);transform-origin:0 50%;">Saved Preset</span>
<svg style="position:absolute;left:678.80px;top:119.70px" width="3.600" height="3.800" viewBox="0 0 4 4"><path d="M4,0 L0,2 L4,4Z" fill="#ececec"/></svg>
<span style="position:absolute;top:133.06px;font-size:5.40px;line-height:1;color:#d8d8d8;white-space:pre;left:581.50px;transform:scaleX(0.8185);transform-origin:0 50%;">White Balance</span>
<svg style="position:absolute;left:678.80px;top:133.10px" width="3.600" height="3.800" viewBox="0 0 4 4"><path d="M4,0 L0,2 L4,4Z" fill="#ececec"/></svg>
<span style="position:absolute;top:146.26px;font-size:5.40px;line-height:1;color:#d8d8d8;white-space:pre;left:581.50px;transform:scaleX(0.8263);transform-origin:0 50%;">Tone Control</span>
<svg style="position:absolute;left:678.80px;top:146.30px" width="3.600" height="3.800" viewBox="0 0 4 4"><path d="M4,0 L0,2 L4,4Z" fill="#ececec"/></svg>
<div style="position:absolute;left:628.00px;top:118.70px;width:47.00px;height:6.00px;background:#5e5e5e;border-radius:1px;box-shadow:0 0 0 0.4px #383838;"></div>
<span style="position:absolute;top:119.66px;font-size:5.40px;line-height:1;color:#e0e0e0;white-space:pre;left:632.00px;transform:scaleX(0.8331);transform-origin:0 50%;">Custom</span>
<svg style="position:absolute;left:671.20px;top:119.70px" width="2.400" height="4" viewBox="0 0 3 5"><path d="M0,2 L1.500,0 L3,2Z M0,3 L1.500,5 L3,3Z" fill="#8c8c8c"/></svg>
<div style="position:absolute;left:669.50px;top:119.20px;width:0.40px;height:5.00px;background:#3a3a3a;"></div>
<div style="position:absolute;left:628.00px;top:132.10px;width:47.00px;height:6.00px;background:#5e5e5e;border-radius:1px;box-shadow:0 0 0 0.4px #383838;"></div>
<span style="position:absolute;top:133.06px;font-size:5.40px;line-height:1;color:#e0e0e0;white-space:pre;left:632.00px;transform:scaleX(0.8331);transform-origin:0 50%;">Custom</span>
<svg style="position:absolute;left:671.20px;top:133.10px" width="2.400" height="4" viewBox="0 0 3 5"><path d="M0,2 L1.500,0 L3,2Z M0,3 L1.500,5 L3,3Z" fill="#8c8c8c"/></svg>
<div style="position:absolute;left:669.50px;top:132.60px;width:0.40px;height:5.00px;background:#3a3a3a;"></div>
<div style="position:absolute;left:628.00px;top:145.30px;width:34.60px;height:5.60px;background:#5e5e5e;border-radius:1px;border:0.5px solid #343434;box-sizing:border-box;"></div>
<span style="position:absolute;top:146.26px;font-size:5.40px;line-height:1;color:#a8a8a8;white-space:pre;left:545.30px;width:200px;text-align:center;">Auto</span>
<span style="position:absolute;top:158.86px;font-size:5.40px;line-height:1;color:#a8a8a8;white-space:pre;right:74.30px;letter-spacing:-0.25px;">Exposure</span>
<div style="position:absolute;left:627.70px;top:158.10px;width:11.30px;height:5.50px;background:#5a5a5a;border-radius:1px;border:0.5px solid #383838;box-sizing:border-box;"></div>
<div style="position:absolute;left:630.90px;top:160.10px;width:4.80px;height:1.40px;background:#4a4a4a;"></div>
<div style="position:absolute;left:639.40px;top:158.10px;width:11.30px;height:5.50px;background:#5a5a5a;border-radius:1px;border:0.5px solid #383838;box-sizing:border-box;"></div>
<div style="position:absolute;left:642.60px;top:160.10px;width:4.80px;height:1.40px;background:#4a4a4a;"></div>
<div style="position:absolute;left:651.10px;top:158.10px;width:11.30px;height:5.50px;background:#5a5a5a;border-radius:1px;border:0.5px solid #383838;box-sizing:border-box;"></div>
<div style="position:absolute;left:654.30px;top:160.10px;width:4.80px;height:1.40px;background:#4a4a4a;"></div>
<div style="position:absolute;left:662.80px;top:158.10px;width:11.30px;height:5.50px;background:#5a5a5a;border-radius:1px;border:0.5px solid #383838;box-sizing:border-box;"></div>
<div style="position:absolute;left:666.00px;top:160.10px;width:4.80px;height:1.40px;background:#4a4a4a;"></div>
<span style="position:absolute;top:170.46px;font-size:5.40px;line-height:1;color:#a8a8a8;white-space:pre;right:74.30px;letter-spacing:-0.25px;">Clarity</span>
<div style="position:absolute;left:627.70px;top:169.70px;width:11.30px;height:5.50px;background:#5a5a5a;border-radius:1px;border:0.5px solid #383838;box-sizing:border-box;"></div>
<div style="position:absolute;left:630.90px;top:171.70px;width:4.80px;height:1.40px;background:#4a4a4a;"></div>
<div style="position:absolute;left:639.40px;top:169.70px;width:11.30px;height:5.50px;background:#5a5a5a;border-radius:1px;border:0.5px solid #383838;box-sizing:border-box;"></div>
<div style="position:absolute;left:642.60px;top:171.70px;width:4.80px;height:1.40px;background:#4a4a4a;"></div>
<div style="position:absolute;left:651.10px;top:169.70px;width:11.30px;height:5.50px;background:#5a5a5a;border-radius:1px;border:0.5px solid #383838;box-sizing:border-box;"></div>
<div style="position:absolute;left:654.30px;top:171.70px;width:4.80px;height:1.40px;background:#4a4a4a;"></div>
<div style="position:absolute;left:662.80px;top:169.70px;width:11.30px;height:5.50px;background:#5a5a5a;border-radius:1px;border:0.5px solid #383838;box-sizing:border-box;"></div>
<div style="position:absolute;left:666.00px;top:171.70px;width:4.80px;height:1.40px;background:#4a4a4a;"></div>
<span style="position:absolute;top:180.36px;font-size:5.40px;line-height:1;color:#a8a8a8;white-space:pre;right:74.30px;letter-spacing:-0.25px;">Vibrance</span>
<div style="position:absolute;left:627.70px;top:179.60px;width:11.30px;height:5.50px;background:#5a5a5a;border-radius:1px;border:0.5px solid #383838;box-sizing:border-box;"></div>
<div style="position:absolute;left:630.90px;top:181.60px;width:4.80px;height:1.40px;background:#4a4a4a;"></div>
<div style="position:absolute;left:639.40px;top:179.60px;width:11.30px;height:5.50px;background:#5a5a5a;border-radius:1px;border:0.5px solid #383838;box-sizing:border-box;"></div>
<div style="position:absolute;left:642.60px;top:181.60px;width:4.80px;height:1.40px;background:#4a4a4a;"></div>
<div style="position:absolute;left:651.10px;top:179.60px;width:11.30px;height:5.50px;background:#5a5a5a;border-radius:1px;border:0.5px solid #383838;box-sizing:border-box;"></div>
<div style="position:absolute;left:654.30px;top:181.60px;width:4.80px;height:1.40px;background:#4a4a4a;"></div>
<div style="position:absolute;left:662.80px;top:179.60px;width:11.30px;height:5.50px;background:#5a5a5a;border-radius:1px;border:0.5px solid #383838;box-sizing:border-box;"></div>
<div style="position:absolute;left:666.00px;top:181.60px;width:4.80px;height:1.40px;background:#4a4a4a;"></div>
<div style="position:absolute;left:640.30px;top:192.00px;width:34.70px;height:5.80px;background:#5c5c5c;border-radius:1px;border:0.5px solid #343434;box-sizing:border-box;"></div>
<span style="position:absolute;top:192.96px;font-size:5.40px;line-height:1;color:#b8b8b8;white-space:pre;left:557.60px;width:200px;text-align:center;letter-spacing:-0.2px;">Reset All</span>
<div style="position:absolute;left:577.50px;top:202.70px;width:109.00px;height:11.60px;background:#333333;"></div>
<span style="position:absolute;top:205.01px;font-size:7.20px;line-height:1;color:#cccccc;white-space:pre;left:643.70px;transform:scaleX(0.8320);transform-origin:0 50%;">Keywording</span>
<svg style="position:absolute;left:679.70px;top:206.60px" width="3.600" height="3.800" viewBox="0 0 4 4"><path d="M4,0 L0,2 L4,4Z" fill="#ececec"/></svg>
<div style="position:absolute;left:577.50px;top:215.50px;width:109.00px;height:11.60px;background:#333333;"></div>
<span style="position:absolute;top:217.81px;font-size:7.20px;line-height:1;color:#cccccc;white-space:pre;left:641.00px;transform:scaleX(0.8249);transform-origin:0 50%;">Keyword List</span>
<svg style="position:absolute;left:679.70px;top:219.40px" width="3.600" height="3.800" viewBox="0 0 4 4"><path d="M4,0 L0,2 L4,4Z" fill="#ececec"/></svg>
<span style="position:absolute;top:218.14px;font-size:6.00px;line-height:1;color:#8a8a8a;white-space:pre;left:482.20px;width:200px;text-align:center;">+</span>
<div style="position:absolute;left:577.50px;top:227.80px;width:109.00px;height:11.80px;background:#333333;"></div>
<span style="position:absolute;top:230.31px;font-size:7.20px;line-height:1;color:#cccccc;white-space:pre;left:650.00px;transform:scaleX(0.8328);transform-origin:0 50%;">Metadata</span>
<svg style="position:absolute;left:679.60px;top:232.10px" width="3.800" height="3.800" viewBox="0 0 4 4"><path d="M0,0 L4,0 L2,4Z" fill="#ececec"/></svg>
<svg style="position:absolute;left:579.800px;top:231.800px" width="4.800" height="4" viewBox="0 0 6 5"><path d="M0,2.500 C1.500,0 4.500,0 6,2.500 C4.500,5 1.500,5 0,2.500Z" fill="#8c8c8c"/><circle cx="3" cy="2.500" r="1" fill="#2c2c2c"/></svg>
<div style="position:absolute;left:590.30px;top:230.80px;width:45.00px;height:6.10px;background:#5e5e5e;border-radius:1px;box-shadow:0 0 0 0.4px #383838;"></div>
<span style="position:absolute;top:231.81px;font-size:5.40px;line-height:1;color:#c4c4c4;white-space:pre;left:594.40px;transform:scaleX(0.8533);transform-origin:0 50%;">Default</span>
<svg style="position:absolute;left:631.50px;top:231.85px" width="2.400" height="4" viewBox="0 0 3 5"><path d="M0,2 L1.500,0 L3,2Z M0,3 L1.500,5 L3,3Z" fill="#8c8c8c"/></svg>
<div style="position:absolute;left:578.30px;top:239.80px;width:106.30px;height:166.00px;background:#484848;border:0.6px solid #5a5a5a;box-sizing:border-box;border-radius:1px;"></div>
<span style="position:absolute;top:245.26px;font-size:5.40px;line-height:1;color:#c4c4c4;white-space:pre;right:79.00px;letter-spacing:-0.2px;">Preset</span>
<div style="position:absolute;left:623.30px;top:244.70px;width:57.70px;height:5.60px;background:#5e5e5e;border-radius:1px;box-shadow:0 0 0 0.4px #383838;"></div>
<span style="position:absolute;top:245.46px;font-size:5.40px;line-height:1;color:#e0e0e0;white-space:pre;left:627.50px;transform:scaleX(0.7746);transform-origin:0 50%;">None</span>
<svg style="position:absolute;left:677.20px;top:245.50px" width="2.400" height="4" viewBox="0 0 3 5"><path d="M0,2 L1.500,0 L3,2Z M0,3 L1.500,5 L3,3Z" fill="#8c8c8c"/></svg>
<div style="position:absolute;left:578.60px;top:253.60px;width:105.70px;height:0.70px;background:#2e2e2e;"></div>
<div style="position:absolute;left:578.60px;top:264.30px;width:105.70px;height:0.70px;background:#2e2e2e;"></div>
<span style="position:absolute;top:257.56px;font-size:5.20px;line-height:1;color:#2e2e2e;white-space:pre;left:597.80px;transform:scaleX(0.8648);transform-origin:0 50%;">Target Photo</span>
<div style="position:absolute;left:627.50px;top:257.00px;width:0.40px;height:5.40px;background:#2e2e2e;"></div>
<span style="position:absolute;top:257.56px;font-size:5.20px;line-height:1;color:#2e2e2e;white-space:pre;left:632.70px;transform:scaleX(0.8265);transform-origin:0 50%;">Selected Photos</span>
<div style="position:absolute;left:623.40px;top:270.00px;width:57.80px;height:6.90px;background:#4c4c4c;border-bottom:0.5px solid #3c3c3c;box-sizing:border-box;"></div>
<div style="position:absolute;left:623.40px;top:277.10px;width:57.80px;height:6.90px;background:#4c4c4c;border-bottom:0.5px solid #3c3c3c;box-sizing:border-box;"></div>
<div style="position:absolute;left:623.40px;top:284.10px;width:57.80px;height:6.90px;background:#4c4c4c;border-bottom:0.5px solid #3c3c3c;box-sizing:border-box;"></div>
<div style="position:absolute;left:623.40px;top:291.50px;width:57.80px;height:6.90px;background:#4c4c4c;border-bottom:0.5px solid #3c3c3c;box-sizing:border-box;"></div>
<div style="position:absolute;left:623.40px;top:298.60px;width:57.80px;height:6.90px;background:#4c4c4c;border-bottom:0.5px solid #3c3c3c;box-sizing:border-box;"></div>
<div style="position:absolute;left:623.40px;top:302.80px;width:57.80px;height:6.90px;background:#4c4c4c;border-bottom:0.5px solid #3c3c3c;box-sizing:border-box;"></div>
<span style="position:absolute;top:271.41px;font-size:5.10px;line-height:1;color:#9c9c9c;white-space:pre;right:79.00px;letter-spacing:-0.12px;">File Name</span>
<span style="position:absolute;top:271.20px;font-size:5.50px;line-height:1;color:#ececec;white-space:pre;left:624.70px;transform:scaleX(0.8535);transform-origin:0 50%;">_K6A1386-HDR.dng</span>
<div style="position:absolute;left:676.00px;top:270.50px;width:5.20px;height:5.80px;background:#5c5c5c;border-radius:0.800px;border:0.4px solid #3a3a3a;box-sizing:border-box;"></div>
<div style="position:absolute;left:677.60px;top:273.10px;width:2.00px;height:0.80px;background:#8a8a8a;"></div>
<span style="position:absolute;top:278.51px;font-size:5.10px;line-height:1;color:#9c9c9c;white-space:pre;right:79.00px;letter-spacing:-0.12px;">Folder</span>
<span style="position:absolute;top:278.30px;font-size:5.50px;line-height:1;color:#ececec;white-space:pre;left:624.70px;transform:scaleX(0.9166);transform-origin:0 50%;">Ford Images</span>
<div style="position:absolute;left:676.00px;top:277.60px;width:5.20px;height:5.80px;background:#5c5c5c;border-radius:0.800px;border:0.4px solid #3a3a3a;box-sizing:border-box;"></div>
<div style="position:absolute;left:677.60px;top:280.20px;width:2.00px;height:0.80px;background:#8a8a8a;"></div>
<span style="position:absolute;top:285.51px;font-size:5.10px;line-height:1;color:#9c9c9c;white-space:pre;right:79.00px;letter-spacing:-0.12px;">Title</span>
<span style="position:absolute;top:292.91px;font-size:5.10px;line-height:1;color:#9c9c9c;white-space:pre;right:79.00px;letter-spacing:-0.12px;">Copyright</span>
<span style="position:absolute;top:292.70px;font-size:5.50px;line-height:1;color:#ececec;white-space:pre;left:624.70px;transform:scaleX(0.8539);transform-origin:0 50%;">Morgan James Media Ltd.</span>
<span style="position:absolute;top:304.21px;font-size:5.10px;line-height:1;color:#9c9c9c;white-space:pre;right:79.00px;letter-spacing:-0.12px;">Creator</span>
<span style="position:absolute;top:304.00px;font-size:5.50px;line-height:1;color:#ececec;white-space:pre;left:624.70px;transform:scaleX(0.8492);transform-origin:0 50%;">Peter Morgan</span>
<span style="position:absolute;top:311.41px;font-size:5.10px;line-height:1;color:#9c9c9c;white-space:pre;right:79.00px;letter-spacing:-0.12px;">Rating</span>
<span style="position:absolute;top:320.21px;font-size:5.10px;line-height:1;color:#9c9c9c;white-space:pre;right:79.00px;letter-spacing:-0.12px;">Dimensions</span>
<span style="position:absolute;top:320.00px;font-size:5.50px;line-height:1;color:#ececec;white-space:pre;left:624.70px;transform:scaleX(0.9677);transform-origin:0 50%;">6720 x 4480</span>
<span style="position:absolute;top:327.71px;font-size:5.10px;line-height:1;color:#9c9c9c;white-space:pre;right:79.00px;letter-spacing:-0.12px;">Capture Date/Time</span>
<span style="position:absolute;top:327.50px;font-size:5.50px;line-height:1;color:#ececec;white-space:pre;left:624.70px;transform:scaleX(0.9175);transform-origin:0 50%;">27/02/2022 18:19:18</span>
<div style="position:absolute;left:676.00px;top:326.80px;width:5.20px;height:5.80px;background:#5c5c5c;border-radius:0.800px;border:0.4px solid #3a3a3a;box-sizing:border-box;"></div>
<div style="position:absolute;left:677.60px;top:329.40px;width:2.00px;height:0.80px;background:#8a8a8a;"></div>
<span style="position:absolute;top:335.11px;font-size:5.10px;line-height:1;color:#9c9c9c;white-space:pre;right:79.00px;letter-spacing:-0.12px;">Model</span>
<span style="position:absolute;top:334.90px;font-size:5.50px;line-height:1;color:#ececec;white-space:pre;left:624.70px;transform:scaleX(0.8645);transform-origin:0 50%;">Canon EO...D Mark IV</span>
<span style="position:absolute;top:343.21px;font-size:5.10px;line-height:1;color:#9c9c9c;white-space:pre;right:79.00px;letter-spacing:-0.12px;">Camera</span>
<span style="position:absolute;top:343.00px;font-size:5.50px;line-height:1;color:#ececec;white-space:pre;left:624.70px;transform:scaleX(0.8997);transform-origin:0 50%;">Canon EOS...057000926</span>
<span style="position:absolute;top:351.01px;font-size:5.10px;line-height:1;color:#9c9c9c;white-space:pre;right:79.00px;letter-spacing:-0.12px;">Lens</span>
<span style="position:absolute;top:350.80px;font-size:5.50px;line-height:1;color:#ececec;white-space:pre;left:624.70px;transform:scaleX(0.8618);transform-origin:0 50%;">EF16-35... 2.8L II USM</span>
<div style="position:absolute;left:676.00px;top:350.10px;width:5.20px;height:5.80px;background:#5c5c5c;border-radius:0.800px;border:0.4px solid #3a3a3a;box-sizing:border-box;"></div>
<div style="position:absolute;left:677.60px;top:352.70px;width:2.00px;height:0.80px;background:#8a8a8a;"></div>
<span style="position:absolute;top:358.51px;font-size:5.10px;line-height:1;color:#9c9c9c;white-space:pre;right:79.00px;letter-spacing:-0.12px;">ISO Speed Rating</span>
<span style="position:absolute;top:358.30px;font-size:5.50px;line-height:1;color:#ececec;white-space:pre;left:624.70px;transform:scaleX(0.8573);transform-origin:0 50%;">ISO 100</span>
<div style="position:absolute;left:676.00px;top:357.60px;width:5.20px;height:5.80px;background:#5c5c5c;border-radius:0.800px;border:0.4px solid #3a3a3a;box-sizing:border-box;"></div>
<div style="position:absolute;left:677.60px;top:360.20px;width:2.00px;height:0.80px;background:#8a8a8a;"></div>
<span style="position:absolute;top:366.31px;font-size:5.10px;line-height:1;color:#9c9c9c;white-space:pre;right:79.00px;letter-spacing:-0.12px;">Flash</span>
<span style="position:absolute;top:366.10px;font-size:5.50px;line-height:1;color:#ececec;white-space:pre;left:624.70px;transform:scaleX(0.9513);transform-origin:0 50%;">Did not fire</span>
<span style="position:absolute;top:374.01px;font-size:5.10px;line-height:1;color:#9c9c9c;white-space:pre;right:79.00px;letter-spacing:-0.12px;">Exposure Time</span>
<span style="position:absolute;top:381.41px;font-size:5.10px;line-height:1;color:#9c9c9c;white-space:pre;right:79.00px;letter-spacing:-0.12px;">F-Stop</span>
<span style="position:absolute;top:381.20px;font-size:5.50px;line-height:1;color:#ececec;white-space:pre;left:624.70px;transform:scaleX(0.9667);transform-origin:0 50%;">f / 8.0</span>
<span style="position:absolute;top:310.72px;font-size:6.80px;line-height:1;color:#ffffff;white-space:pre;left:527.10px;width:200px;text-align:center;font-family:'DejaVu Sans',sans-serif;">★</span>
<span style="position:absolute;top:310.72px;font-size:6.80px;line-height:1;color:#ffffff;white-space:pre;left:533.15px;width:200px;text-align:center;font-family:'DejaVu Sans',sans-serif;">★</span>
<span style="position:absolute;top:310.72px;font-size:6.80px;line-height:1;color:#ffffff;white-space:pre;left:539.20px;width:200px;text-align:center;font-family:'DejaVu Sans',sans-serif;">★</span>
<span style="position:absolute;top:310.72px;font-size:6.80px;line-height:1;color:#ffffff;white-space:pre;left:545.25px;width:200px;text-align:center;font-family:'DejaVu Sans',sans-serif;">★</span>
<span style="position:absolute;top:310.72px;font-size:6.80px;line-height:1;color:#ffffff;white-space:pre;left:551.30px;width:200px;text-align:center;font-family:'DejaVu Sans',sans-serif;">★</span>
<span style="position:absolute;top:373.52px;font-size:3.20px;line-height:1;color:#ececec;white-space:pre;left:624.70px;">1</span>
<span style="position:absolute;top:374.07px;font-size:4.80px;line-height:1;color:#ececec;white-space:pre;left:626.00px;">/</span>
<span style="position:absolute;top:376.52px;font-size:3.20px;line-height:1;color:#ececec;white-space:pre;left:627.20px;transform:scaleX(0.7866);transform-origin:0 50%;">100</span>
<span style="position:absolute;top:373.80px;font-size:5.50px;line-height:1;color:#ececec;white-space:pre;left:633.60px;transform:scaleX(0.9581);transform-origin:0 50%;">sec</span>
<div style="position:absolute;left:615.40px;top:393.80px;width:31.90px;height:7.70px;background:#585858;border-radius:1px;border:0.5px solid #343434;box-sizing:border-box;"></div>
<span style="position:absolute;top:395.51px;font-size:5.30px;line-height:1;color:#8e8e8e;white-space:pre;left:531.40px;width:200px;text-align:center;letter-spacing:-0.2px;">Customize...</span>
<div style="position:absolute;left:577.50px;top:406.80px;width:109.00px;height:11.20px;background:#333333;"></div>
<span style="position:absolute;top:409.21px;font-size:7.20px;line-height:1;color:#cccccc;white-space:pre;left:646.00px;transform:scaleX(0.8331);transform-origin:0 50%;">Comments</span>
<svg style="position:absolute;left:679.60px;top:411.00px" width="3.800" height="3.800" viewBox="0 0 4 4"><path d="M0,0 L4,0 L2,4Z" fill="#ececec"/></svg>
<div style="position:absolute;left:578.30px;top:418.00px;width:106.30px;height:10.00px;background:#484848;border:0.6px solid #5a5a5a;border-bottom:none;box-sizing:border-box;"></div>
<div style="position:absolute;left:578px;top:418px;width:107px;height:10px;overflow:hidden"><span style="position:absolute;top:6.97px;font-size:5.00px;line-height:1;color:#909090;white-space:pre;left:-46.50px;width:200px;text-align:center;letter-spacing:-0.2px;">Comments not supported here</span></div>
<div style="position:absolute;left:575.00px;top:428.00px;width:117.50px;height:17.00px;background:#262626;"></div>
<div style="position:absolute;left:630.40px;top:429.20px;width:2.00px;height:1.00px;background:#999;border-radius:1px;"></div>
<div style="position:absolute;left:578.30px;top:431.80px;width:6.60px;height:10.00px;background:#3a3a3a;border:0.5px solid #2a2a2a;box-sizing:border-box;border-radius:1px;"></div>
<div style="position:absolute;left:580.30px;top:433.60px;width:2.70px;height:3.40px;background:#2c2c2c;border-radius:0.600px;"></div>
<div style="position:absolute;left:585.80px;top:431.80px;width:44.20px;height:10.00px;background:#3a3a3a;border:0.5px solid #2a2a2a;box-sizing:border-box;border-radius:1px;"></div>
<span style="position:absolute;top:433.22px;font-size:6.80px;line-height:1;color:#1e1e1e;white-space:pre;left:507.90px;width:200px;text-align:center;letter-spacing:-0.2px;">Auto Sync</span>
<div style="position:absolute;left:632.60px;top:431.80px;width:51.70px;height:10.00px;background:#3a3a3a;border:0.5px solid #2a2a2a;box-sizing:border-box;border-radius:1px;"></div>
<span style="position:absolute;top:433.22px;font-size:6.80px;line-height:1;color:#1e1e1e;white-space:pre;left:558.45px;width:200px;text-align:center;letter-spacing:-0.2px;">Sync Settings</span>
<div style="position:absolute;left:101.60px;top:15.40px;width:113.10px;height:296.50px;border-radius:3px;box-shadow:0 2.500px 7px rgba(0,0,0,0.38),0 0 0 0.500px rgba(0,0,0,0.35);overflow:hidden;background:linear-gradient(#a1a1a1 0px,#a9a9a9 22px,#bfbfbf 36px,#cacaca 48px,#cbcbcb 100%);">
<svg style="position:absolute;left:0;top:0" width="113.10" height="296.50" viewBox="101.60 15.40 113.10 296.50">
<defs><filter id="mb1" x="-50%" y="-50%" width="200%" height="200%"><feGaussianBlur stdDeviation="9"/></filter><filter id="mb2" x="-50%" y="-50%" width="200%" height="200%"><feGaussianBlur stdDeviation="6"/></filter><linearGradient id="mlr" x1="0" y1="0" x2="1" y2="0"><stop offset="0" stop-color="#b2b2b2"/><stop offset="0.45" stop-color="#c2c2c2"/><stop offset="0.62" stop-color="#d2d2d2"/><stop offset="1" stop-color="#d4d4d4"/></linearGradient></defs>
<rect x="100" y="165" width="120" height="150" fill="url(#mlr)"/>
<rect x="100" y="150" width="120" height="30" fill="#c4c4c4" filter="url(#mb2)"/>
<rect x="96" y="62" width="52" height="86" fill="#b6d0f0" filter="url(#mb1)"/>
<rect x="98" y="70" width="26" height="44" fill="#9dc0ee" filter="url(#mb1)" opacity="0.6"/>
<rect x="172" y="92" width="50" height="52" fill="#efefef" filter="url(#mb1)"/>
<rect x="184" y="102" width="36" height="36" fill="#f2f2f2" filter="url(#mb2)" opacity="0.5"/>
<rect x="176" y="222" width="44" height="40" fill="#e2e8f2" filter="url(#mb1)" opacity="0.9"/>
</svg>
</div>
<div style="position:absolute;left:104.00px;top:254.00px;width:109.00px;height:8.00px;background:rgba(0,0,0,0.16);border-radius:1.500px;"></div>
<div style="position:absolute;left:107.00px;top:54.90px;width:102.30px;height:0.60px;background:rgba(0,0,0,0.10);"></div>
<div style="position:absolute;left:107.00px;top:67.90px;width:102.30px;height:0.60px;background:rgba(0,0,0,0.10);"></div>
<div style="position:absolute;left:107.00px;top:135.20px;width:102.30px;height:0.60px;background:rgba(0,0,0,0.10);"></div>
<div style="position:absolute;left:107.00px;top:148.40px;width:102.30px;height:0.60px;background:rgba(0,0,0,0.10);"></div>
<div style="position:absolute;left:107.00px;top:170.70px;width:102.30px;height:0.60px;background:rgba(0,0,0,0.10);"></div>
<div style="position:absolute;left:107.00px;top:192.90px;width:102.30px;height:0.60px;background:rgba(0,0,0,0.10);"></div>
<div style="position:absolute;left:107.00px;top:206.20px;width:102.30px;height:0.60px;background:rgba(0,0,0,0.10);"></div>
<div style="position:absolute;left:107.00px;top:237.20px;width:102.30px;height:0.60px;background:rgba(0,0,0,0.10);"></div>
<div style="position:absolute;left:107.00px;top:250.40px;width:102.30px;height:0.60px;background:rgba(0,0,0,0.10);"></div>
<div style="position:absolute;left:107.00px;top:264.00px;width:102.30px;height:0.60px;background:rgba(0,0,0,0.10);"></div>
<div style="position:absolute;left:107.00px;top:277.20px;width:102.30px;height:0.60px;background:rgba(0,0,0,0.10);"></div>
<div style="position:absolute;left:107.00px;top:299.80px;width:102.30px;height:0.60px;background:rgba(0,0,0,0.10);"></div>
<span style="position:absolute;top:18.84px;font-size:6.00px;line-height:1;color:#262626;white-space:pre;left:111.60px;transform:scaleX(0.9107);transform-origin:0 50%;">New Collection...</span>
<span style="position:absolute;top:19.34px;font-size:6.00px;line-height:1;color:#858585;white-space:pre;right:490.10px;font-family:'DejaVu Sans',sans-serif;letter-spacing:0.3px;">⌘N</span>
<span style="position:absolute;top:27.84px;font-size:6.00px;line-height:1;color:#262626;white-space:pre;left:111.60px;transform:scaleX(0.9156);transform-origin:0 50%;">New Smart Collection...</span>
<span style="position:absolute;top:36.64px;font-size:6.00px;line-height:1;color:#262626;white-space:pre;left:111.60px;transform:scaleX(0.9194);transform-origin:0 50%;">New Collection Set...</span>
<span style="position:absolute;top:45.44px;font-size:6.00px;line-height:1;color:#262626;white-space:pre;left:111.60px;transform:scaleX(0.9053);transform-origin:0 50%;">New Folder...</span>
<span style="position:absolute;top:45.94px;font-size:6.00px;line-height:1;color:#858585;white-space:pre;right:490.10px;font-family:'DejaVu Sans',sans-serif;letter-spacing:0.3px;">⇧⌘N</span>
<span style="position:absolute;top:58.84px;font-size:6.00px;line-height:1;color:#262626;white-space:pre;left:111.60px;transform:scaleX(0.8997);transform-origin:0 50%;">Find...</span>
<span style="position:absolute;top:59.34px;font-size:6.00px;line-height:1;color:#858585;white-space:pre;right:490.10px;font-family:'DejaVu Sans',sans-serif;letter-spacing:0.3px;">⌘F</span>
<span style="position:absolute;top:72.24px;font-size:6.00px;line-height:1;color:#262626;white-space:pre;left:111.60px;transform:scaleX(0.8914);transform-origin:0 50%;">Enable Filters</span>
<span style="position:absolute;top:72.74px;font-size:6.00px;line-height:1;color:#858585;white-space:pre;right:490.10px;font-family:'DejaVu Sans',sans-serif;letter-spacing:0.3px;">⌘L</span>
<span style="position:absolute;top:81.04px;font-size:6.00px;line-height:1;color:#262626;white-space:pre;left:111.60px;transform:scaleX(0.9121);transform-origin:0 50%;">Filter by Preset</span>
<svg style="position:absolute;left:205.400px;top:82.00px" width="2.800" height="4.400" viewBox="0 0 2.800 4.400"><path d="M0.500,0.500 L2.300,2.200 L0.500,3.900" fill="none" stroke="#2e2e2e" stroke-width="0.900"/></svg>
<span style="position:absolute;top:89.94px;font-size:6.00px;line-height:1;color:#262626;white-space:pre;left:111.60px;transform:scaleX(0.9055);transform-origin:0 50%;">Filter by Flag</span>
<svg style="position:absolute;left:205.400px;top:90.90px" width="2.800" height="4.400" viewBox="0 0 2.800 4.400"><path d="M0.500,0.500 L2.300,2.200 L0.500,3.900" fill="none" stroke="#2e2e2e" stroke-width="0.900"/></svg>
<span style="position:absolute;top:98.84px;font-size:6.00px;line-height:1;color:#262626;white-space:pre;left:111.60px;transform:scaleX(0.9071);transform-origin:0 50%;">Filter by Rating</span>
<svg style="position:absolute;left:205.400px;top:99.80px" width="2.800" height="4.400" viewBox="0 0 2.800 4.400"><path d="M0.500,0.500 L2.300,2.200 L0.500,3.900" fill="none" stroke="#2e2e2e" stroke-width="0.900"/></svg>
<span style="position:absolute;top:107.74px;font-size:6.00px;line-height:1;color:#262626;white-space:pre;left:111.60px;transform:scaleX(0.9145);transform-origin:0 50%;">Filter by Color Label</span>
<svg style="position:absolute;left:205.400px;top:108.70px" width="2.800" height="4.400" viewBox="0 0 2.800 4.400"><path d="M0.500,0.500 L2.300,2.200 L0.500,3.900" fill="none" stroke="#2e2e2e" stroke-width="0.900"/></svg>
<span style="position:absolute;top:116.64px;font-size:6.00px;line-height:1;color:#262626;white-space:pre;left:111.60px;transform:scaleX(0.9225);transform-origin:0 50%;">Filter by Kind</span>
<svg style="position:absolute;left:205.400px;top:117.60px" width="2.800" height="4.400" viewBox="0 0 2.800 4.400"><path d="M0.500,0.500 L2.300,2.200 L0.500,3.900" fill="none" stroke="#2e2e2e" stroke-width="0.900"/></svg>
<span style="position:absolute;top:125.54px;font-size:6.00px;line-height:1;color:#262626;white-space:pre;left:111.60px;transform:scaleX(0.9225);transform-origin:0 50%;">Filter by Metadata</span>
<svg style="position:absolute;left:205.400px;top:126.50px" width="2.800" height="4.400" viewBox="0 0 2.800 4.400"><path d="M0.500,0.500 L2.300,2.200 L0.500,3.900" fill="none" stroke="#2e2e2e" stroke-width="0.900"/></svg>
<span style="position:absolute;top:139.14px;font-size:6.00px;line-height:1;color:#262626;white-space:pre;left:111.60px;transform:scaleX(0.9091);transform-origin:0 50%;">Show Photos in Subfolders</span>
<span style="position:absolute;top:152.34px;font-size:6.00px;line-height:1;color:#262626;white-space:pre;left:111.60px;transform:scaleX(0.8948);transform-origin:0 50%;">Refine Photos...</span>
<span style="position:absolute;top:152.84px;font-size:6.00px;line-height:1;color:#858585;white-space:pre;right:490.10px;font-family:'DejaVu Sans',sans-serif;letter-spacing:0.3px;">⌥⌘R</span>
<span style="position:absolute;top:161.24px;font-size:6.00px;line-height:1;color:#9d9d9d;white-space:pre;left:111.60px;transform:scaleX(0.8938);transform-origin:0 50%;">Review Comments</span>
<span style="position:absolute;top:174.74px;font-size:6.00px;line-height:1;color:#262626;white-space:pre;left:111.60px;transform:scaleX(0.8884);transform-origin:0 50%;">Rename Photo...</span>
<span style="position:absolute;top:175.79px;font-size:4.00px;line-height:1;color:#8e8e8e;white-space:pre;right:490.40px;">F2</span>
<span style="position:absolute;top:183.64px;font-size:6.00px;line-height:1;color:#262626;white-space:pre;left:111.60px;transform:scaleX(0.9088);transform-origin:0 50%;">Convert Photo to DNG...</span>
<span style="position:absolute;top:196.84px;font-size:6.00px;line-height:1;color:#9d9d9d;white-space:pre;left:111.60px;transform:scaleX(0.9250);transform-origin:0 50%;">Flat-Field Correction...</span>
<span style="position:absolute;top:210.14px;font-size:6.00px;line-height:1;color:#262626;white-space:pre;left:111.60px;transform:scaleX(0.9157);transform-origin:0 50%;">Find All Missing Photos</span>
<span style="position:absolute;top:219.04px;font-size:6.00px;line-height:1;color:#262626;white-space:pre;left:111.60px;transform:scaleX(0.8977);transform-origin:0 50%;">Validate DNG Files</span>
<span style="position:absolute;top:227.84px;font-size:6.00px;line-height:1;color:#262626;white-space:pre;left:111.60px;transform:scaleX(0.9119);transform-origin:0 50%;">Synchronize Folder...</span>
<span style="position:absolute;top:241.34px;font-size:6.00px;line-height:1;color:#262626;white-space:pre;left:111.60px;transform:scaleX(0.8937);transform-origin:0 50%;">Find Faces Again...</span>
<span style="position:absolute;top:254.64px;font-size:6.00px;line-height:1;color:#262626;white-space:pre;left:111.60px;transform:scaleX(0.8915);transform-origin:0 50%;">Previews</span>
<svg style="position:absolute;left:205.400px;top:255.60px" width="2.800" height="4.400" viewBox="0 0 2.800 4.400"><path d="M0.500,0.500 L2.300,2.200 L0.500,3.900" fill="none" stroke="#2e2e2e" stroke-width="0.900"/></svg>
<span style="position:absolute;top:267.94px;font-size:6.00px;line-height:1;color:#262626;white-space:pre;left:111.60px;transform:scaleX(0.9008);transform-origin:0 50%;">Find Previous Process Photos</span>
<span style="position:absolute;top:281.34px;font-size:6.00px;line-height:1;color:#262626;white-space:pre;left:111.60px;transform:scaleX(0.9116);transform-origin:0 50%;">Previous Selected Photo</span>
<span style="position:absolute;top:281.84px;font-size:6.00px;line-height:1;color:#858585;white-space:pre;right:490.10px;font-family:'DejaVu Sans',sans-serif;letter-spacing:0.3px;">⌘◀</span>
<span style="position:absolute;top:290.24px;font-size:6.00px;line-height:1;color:#262626;white-space:pre;left:111.60px;transform:scaleX(0.9214);transform-origin:0 50%;">Next Selected Photo</span>
<span style="position:absolute;top:290.74px;font-size:6.00px;line-height:1;color:#858585;white-space:pre;right:490.10px;font-family:'DejaVu Sans',sans-serif;letter-spacing:0.3px;">⌘▶</span>
<span style="position:absolute;top:303.54px;font-size:6.00px;line-height:1;color:#262626;white-space:pre;left:111.60px;transform:scaleX(0.9210);transform-origin:0 50%;">Plug-in Extras</span>
<svg style="position:absolute;left:205.400px;top:304.50px" width="2.800" height="4.400" viewBox="0 0 2.800 4.400"><path d="M0.500,0.500 L2.300,2.200 L0.500,3.900" fill="none" stroke="#2e2e2e" stroke-width="0.900"/></svg>
<svg style="position:absolute;left:105.400px;top:139.800px" width="4.200" height="4.600" viewBox="0 0 4.200 4.600"><path d="M0.500,2.600 L1.600,4 L3.700,0.500" fill="none" stroke="#262626" stroke-width="0.800"/></svg>
<div style="position:absolute;left:212.90px;top:251.70px;width:86.10px;height:52.00px;border-radius:3px;box-shadow:0 2.500px 7px rgba(0,0,0,0.4),0 0 0 0.500px rgba(0,0,0,0.35);overflow:hidden;background:linear-gradient(100deg,#d4d4d4 0%,#cdcdcd 45%,#bebebe 100%);"></div>
<div style="position:absolute;left:214.70px;top:254.00px;width:82.50px;height:8.00px;background:#3b7af5;border-radius:1.800px;"></div>
<span style="position:absolute;top:254.84px;font-size:6.00px;line-height:1;color:#ffffff;white-space:pre;left:218.60px;transform:scaleX(0.9104);transform-origin:0 50%;">Build Standard-Sized Previews</span>
<span style="position:absolute;top:263.84px;font-size:6.00px;line-height:1;color:#262626;white-space:pre;left:218.60px;transform:scaleX(0.8712);transform-origin:0 50%;">Build 1:1 Previews</span>
<span style="position:absolute;top:272.54px;font-size:6.00px;line-height:1;color:#262626;white-space:pre;left:218.60px;transform:scaleX(0.8834);transform-origin:0 50%;">Discard 1:1 Previews...</span>
<span style="position:absolute;top:285.84px;font-size:6.00px;line-height:1;color:#262626;white-space:pre;left:218.60px;transform:scaleX(0.9067);transform-origin:0 50%;">Build Smart Previews</span>
<span style="position:absolute;top:294.84px;font-size:6.00px;line-height:1;color:#262626;white-space:pre;left:218.60px;transform:scaleX(0.9041);transform-origin:0 50%;">Discard Smart Previews...</span>
<div style="position:absolute;left:218.60px;top:282.00px;width:75.00px;height:0.60px;background:rgba(0,0,0,0.13);"></div>
</div></body></html>
